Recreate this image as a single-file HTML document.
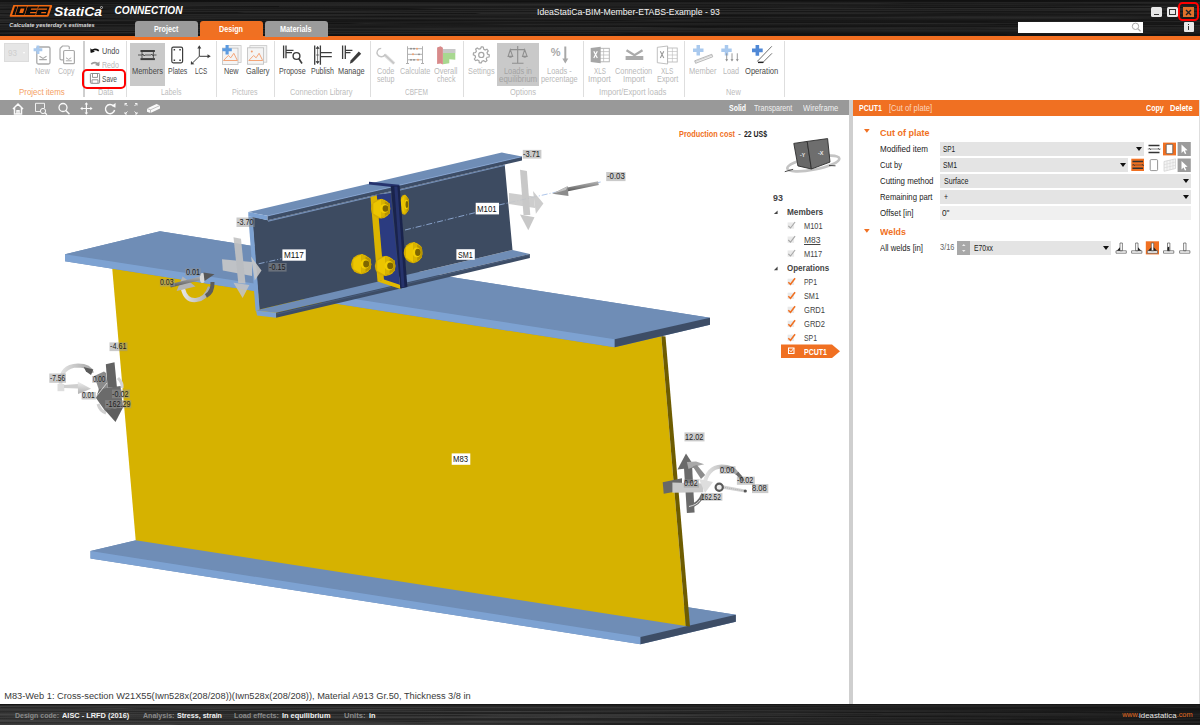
<!DOCTYPE html>
<html><head><meta charset="utf-8"><style>*{margin:0;padding:0;box-sizing:border-box}
html,body{width:1200px;height:725px;overflow:hidden;background:#fff;font-family:"Liberation Sans",sans-serif;position:relative}
.a{position:absolute;white-space:pre}
#hdr{position:absolute;left:0;top:0;width:1200px;height:36px;background:#121212;
background-image:repeating-linear-gradient(180deg,rgba(255,255,255,0) 0px,rgba(255,255,255,0.06) 1px,rgba(255,255,255,0) 2px,rgba(0,0,0,0) 3px,rgba(255,255,255,0.09) 4px,rgba(0,0,0,0) 5px,rgba(0,0,0,0) 7px)}
#oline{position:absolute;left:0;top:36px;width:1200px;height:3px;background:#f07022}
.tab{position:absolute;top:21.4px;height:15.6px;border-radius:3px 3px 0 0}
.sep{position:absolute;top:41px;width:1px;height:56px;background:#dedede}
#vtb{position:absolute;left:0;top:100px;width:849px;height:15px;background:#999}
#vsep{position:absolute;left:849px;top:100px;width:4px;height:604px;background:#cfcfcf}
#phdr{position:absolute;left:853px;top:100px;width:346px;height:15.5px;background:#f07022}
#rline{position:absolute;left:1199px;top:100px;width:1px;height:604px;background:#dedede}
.fld{position:absolute;background:#e4e4e4}
.dd{position:absolute;width:0;height:0;border-left:3px solid transparent;border-right:3px solid transparent;border-top:4px solid #111}
#ftr{position:absolute;left:0;top:704px;width:1200px;height:21px;background:#121212;
background-image:repeating-linear-gradient(180deg,rgba(255,255,255,0) 0px,rgba(255,255,255,0.07) 1px,rgba(255,255,255,0) 2px,rgba(0,0,0,0) 4px,rgba(255,255,255,0.06) 5px,rgba(0,0,0,0) 6px)}
svg{position:absolute;overflow:visible}
</style></head><body>
<div class="a" style="left:0;top:0px;width:1200px;height:36px;background:#101010"></div>
<div class="a" style="left:0;top:0px;width:1200px;height:1px;background:linear-gradient(90deg,rgba(255,255,255,0.020) 0.0%,rgba(255,255,255,0.001) 5.8%,rgba(255,255,255,0.017) 7.2%,rgba(255,255,255,0.003) 15.1%,rgba(255,255,255,0.004) 32.4%,rgba(255,255,255,0.017) 36.6%,rgba(255,255,255,0.033) 53.6%,rgba(255,255,255,0.005) 65.1%,rgba(255,255,255,0.009) 100.0%)"></div>
<div class="a" style="left:0;top:1px;width:1200px;height:1px;background:linear-gradient(90deg,rgba(255,255,255,0.012) 0.0%,rgba(255,255,255,0.006) 4.7%,rgba(255,255,255,0.005) 39.7%,rgba(255,255,255,0.012) 57.7%,rgba(255,255,255,0.033) 62.7%,rgba(255,255,255,0.007) 85.8%,rgba(255,255,255,0.023) 94.8%,rgba(255,255,255,0.026) 97.6%,rgba(255,255,255,0.015) 100.0%)"></div>
<div class="a" style="left:0;top:2px;width:1200px;height:1px;background:linear-gradient(90deg,rgba(255,255,255,0.069) 0.0%,rgba(255,255,255,0.055) 6.0%,rgba(255,255,255,0.040) 6.3%,rgba(255,255,255,0.089) 20.6%,rgba(255,255,255,0.080) 31.4%,rgba(255,255,255,0.034) 42.8%,rgba(255,255,255,0.067) 54.8%,rgba(255,255,255,0.063) 68.0%,rgba(255,255,255,0.098) 100.0%)"></div>
<div class="a" style="left:0;top:3px;width:1200px;height:1px;background:linear-gradient(90deg,rgba(255,255,255,0.059) 0.0%,rgba(255,255,255,0.014) 11.8%,rgba(255,255,255,0.077) 15.2%,rgba(255,255,255,0.086) 28.8%,rgba(255,255,255,0.067) 41.8%,rgba(255,255,255,0.098) 72.9%,rgba(255,255,255,0.041) 75.7%,rgba(255,255,255,0.080) 98.0%,rgba(255,255,255,0.069) 100.0%)"></div>
<div class="a" style="left:0;top:4px;width:1200px;height:1px;background:linear-gradient(90deg,rgba(255,255,255,0.080) 0.0%,rgba(255,255,255,0.075) 6.1%,rgba(255,255,255,0.109) 45.6%,rgba(255,255,255,0.092) 47.4%,rgba(255,255,255,0.038) 58.0%,rgba(255,255,255,0.049) 66.4%,rgba(255,255,255,0.077) 84.0%,rgba(255,255,255,0.012) 94.5%,rgba(255,255,255,0.056) 100.0%)"></div>
<div class="a" style="left:0;top:5px;width:1200px;height:1px;background:linear-gradient(90deg,rgba(255,255,255,0.097) 0.0%,rgba(255,255,255,0.018) 5.9%,rgba(255,255,255,0.055) 11.7%,rgba(255,255,255,0.065) 12.9%,rgba(255,255,255,0.098) 16.8%,rgba(255,255,255,0.092) 24.8%,rgba(255,255,255,0.096) 39.1%,rgba(255,255,255,0.038) 76.8%,rgba(255,255,255,0.052) 100.0%)"></div>
<div class="a" style="left:0;top:6px;width:1200px;height:1px;background:linear-gradient(90deg,rgba(255,255,255,0.058) 0.0%,rgba(255,255,255,0.069) 15.1%,rgba(255,255,255,0.036) 17.6%,rgba(255,255,255,0.010) 23.2%,rgba(255,255,255,0.052) 23.3%,rgba(255,255,255,0.047) 35.9%,rgba(255,255,255,0.067) 88.4%,rgba(255,255,255,0.105) 95.8%,rgba(255,255,255,0.079) 100.0%)"></div>
<div class="a" style="left:0;top:7px;width:1200px;height:1px;background:linear-gradient(90deg,rgba(255,255,255,0.090) 0.0%,rgba(255,255,255,0.049) 5.4%,rgba(255,255,255,0.050) 51.5%,rgba(255,255,255,0.020) 61.8%,rgba(255,255,255,0.073) 67.6%,rgba(255,255,255,0.016) 78.0%,rgba(255,255,255,0.017) 87.5%,rgba(255,255,255,0.031) 90.0%,rgba(255,255,255,0.026) 100.0%)"></div>
<div class="a" style="left:0;top:8px;width:1200px;height:1px;background:linear-gradient(90deg,rgba(255,255,255,0.097) 0.0%,rgba(255,255,255,0.071) 0.0%,rgba(255,255,255,0.025) 2.6%,rgba(255,255,255,0.035) 5.3%,rgba(255,255,255,0.045) 10.1%,rgba(255,255,255,0.046) 15.1%,rgba(255,255,255,0.022) 34.0%,rgba(255,255,255,0.095) 36.4%,rgba(255,255,255,0.109) 100.0%)"></div>
<div class="a" style="left:0;top:9px;width:1200px;height:1px;background:linear-gradient(90deg,rgba(255,255,255,0.026) 0.0%,rgba(255,255,255,0.012) 8.6%,rgba(255,255,255,0.105) 10.2%,rgba(255,255,255,0.063) 26.5%,rgba(255,255,255,0.025) 34.3%,rgba(255,255,255,0.064) 46.6%,rgba(255,255,255,0.013) 48.4%,rgba(255,255,255,0.063) 82.9%,rgba(255,255,255,0.108) 100.0%)"></div>
<div class="a" style="left:0;top:10px;width:1200px;height:1px;background:linear-gradient(90deg,rgba(255,255,255,0.088) 0.0%,rgba(255,255,255,0.043) 16.7%,rgba(255,255,255,0.032) 26.1%,rgba(255,255,255,0.091) 36.7%,rgba(255,255,255,0.108) 53.3%,rgba(255,255,255,0.095) 69.6%,rgba(255,255,255,0.091) 77.2%,rgba(255,255,255,0.092) 86.3%,rgba(255,255,255,0.084) 100.0%)"></div>
<div class="a" style="left:0;top:11px;width:1200px;height:1px;background:linear-gradient(90deg,rgba(255,255,255,0.079) 0.0%,rgba(255,255,255,0.106) 2.8%,rgba(255,255,255,0.055) 2.9%,rgba(255,255,255,0.104) 22.7%,rgba(255,255,255,0.109) 25.9%,rgba(255,255,255,0.106) 27.9%,rgba(255,255,255,0.046) 35.6%,rgba(255,255,255,0.032) 51.8%,rgba(255,255,255,0.033) 100.0%)"></div>
<div class="a" style="left:0;top:12px;width:1200px;height:1px;background:linear-gradient(90deg,rgba(255,255,255,0.090) 0.0%,rgba(255,255,255,0.018) 19.7%,rgba(255,255,255,0.076) 20.4%,rgba(255,255,255,0.101) 47.9%,rgba(255,255,255,0.088) 62.4%,rgba(255,255,255,0.085) 65.3%,rgba(255,255,255,0.058) 84.0%,rgba(255,255,255,0.028) 90.0%,rgba(255,255,255,0.089) 100.0%)"></div>
<div class="a" style="left:0;top:13px;width:1200px;height:1px;background:linear-gradient(90deg,rgba(255,255,255,0.027) 0.0%,rgba(255,255,255,0.023) 33.3%,rgba(255,255,255,0.025) 39.6%,rgba(255,255,255,0.100) 40.1%,rgba(255,255,255,0.091) 72.5%,rgba(255,255,255,0.025) 80.1%,rgba(255,255,255,0.093) 94.7%,rgba(255,255,255,0.108) 97.2%,rgba(255,255,255,0.076) 100.0%)"></div>
<div class="a" style="left:0;top:14px;width:1200px;height:1px;background:linear-gradient(90deg,rgba(255,255,255,0.103) 0.0%,rgba(255,255,255,0.053) 1.4%,rgba(255,255,255,0.097) 13.1%,rgba(255,255,255,0.093) 35.0%,rgba(255,255,255,0.031) 52.7%,rgba(255,255,255,0.035) 54.9%,rgba(255,255,255,0.039) 65.0%,rgba(255,255,255,0.034) 97.1%,rgba(255,255,255,0.069) 100.0%)"></div>
<div class="a" style="left:0;top:15px;width:1200px;height:1px;background:linear-gradient(90deg,rgba(255,255,255,0.100) 0.0%,rgba(255,255,255,0.052) 13.1%,rgba(255,255,255,0.102) 25.9%,rgba(255,255,255,0.060) 35.4%,rgba(255,255,255,0.063) 41.9%,rgba(255,255,255,0.062) 45.8%,rgba(255,255,255,0.012) 58.3%,rgba(255,255,255,0.054) 91.0%,rgba(255,255,255,0.028) 100.0%)"></div>
<div class="a" style="left:0;top:16px;width:1200px;height:1px;background:linear-gradient(90deg,rgba(255,255,255,0.062) 0.0%,rgba(255,255,255,0.066) 0.4%,rgba(255,255,255,0.088) 17.2%,rgba(255,255,255,0.021) 32.6%,rgba(255,255,255,0.066) 47.3%,rgba(255,255,255,0.035) 55.6%,rgba(255,255,255,0.038) 72.5%,rgba(255,255,255,0.087) 79.9%,rgba(255,255,255,0.061) 100.0%)"></div>
<div class="a" style="left:0;top:17px;width:1200px;height:1px;background:linear-gradient(90deg,rgba(255,255,255,0.079) 0.0%,rgba(255,255,255,0.055) 44.3%,rgba(255,255,255,0.063) 50.6%,rgba(255,255,255,0.058) 51.2%,rgba(255,255,255,0.104) 56.2%,rgba(255,255,255,0.080) 61.3%,rgba(255,255,255,0.098) 76.0%,rgba(255,255,255,0.104) 91.2%,rgba(255,255,255,0.036) 100.0%)"></div>
<div class="a" style="left:0;top:18px;width:1200px;height:1px;background:linear-gradient(90deg,rgba(255,255,255,0.034) 0.0%,rgba(255,255,255,0.017) 7.3%,rgba(255,255,255,0.077) 12.2%,rgba(255,255,255,0.088) 13.7%,rgba(255,255,255,0.100) 44.2%,rgba(255,255,255,0.025) 56.0%,rgba(255,255,255,0.082) 84.0%,rgba(255,255,255,0.076) 94.3%,rgba(255,255,255,0.024) 100.0%)"></div>
<div class="a" style="left:0;top:19px;width:1200px;height:1px;background:linear-gradient(90deg,rgba(255,255,255,0.093) 0.0%,rgba(255,255,255,0.026) 22.0%,rgba(255,255,255,0.053) 39.8%,rgba(255,255,255,0.062) 48.7%,rgba(255,255,255,0.044) 88.3%,rgba(255,255,255,0.030) 95.3%,rgba(255,255,255,0.042) 96.8%,rgba(255,255,255,0.082) 99.0%,rgba(255,255,255,0.012) 100.0%)"></div>
<div class="a" style="left:0;top:20px;width:1200px;height:1px;background:linear-gradient(90deg,rgba(255,255,255,0.109) 0.0%,rgba(255,255,255,0.089) 1.8%,rgba(255,255,255,0.107) 6.4%,rgba(255,255,255,0.020) 33.1%,rgba(255,255,255,0.037) 44.0%,rgba(255,255,255,0.014) 51.2%,rgba(255,255,255,0.088) 55.4%,rgba(255,255,255,0.037) 62.4%,rgba(255,255,255,0.023) 100.0%)"></div>
<div class="a" style="left:0;top:21px;width:1200px;height:1px;background:linear-gradient(90deg,rgba(255,255,255,0.080) 0.0%,rgba(255,255,255,0.019) 14.9%,rgba(255,255,255,0.016) 25.9%,rgba(255,255,255,0.079) 42.2%,rgba(255,255,255,0.053) 57.1%,rgba(255,255,255,0.017) 81.9%,rgba(255,255,255,0.104) 91.1%,rgba(255,255,255,0.073) 91.9%,rgba(255,255,255,0.090) 100.0%)"></div>
<div class="a" style="left:0;top:22px;width:1200px;height:1px;background:linear-gradient(90deg,rgba(255,255,255,0.103) 0.0%,rgba(255,255,255,0.037) 6.7%,rgba(255,255,255,0.023) 8.4%,rgba(255,255,255,0.063) 33.9%,rgba(255,255,255,0.034) 45.4%,rgba(255,255,255,0.021) 55.3%,rgba(255,255,255,0.026) 85.6%,rgba(255,255,255,0.015) 86.3%,rgba(255,255,255,0.030) 100.0%)"></div>
<div class="a" style="left:0;top:23px;width:1200px;height:1px;background:linear-gradient(90deg,rgba(255,255,255,0.012) 0.0%,rgba(255,255,255,0.035) 17.8%,rgba(255,255,255,0.012) 29.0%,rgba(255,255,255,0.083) 30.5%,rgba(255,255,255,0.065) 31.2%,rgba(255,255,255,0.029) 34.7%,rgba(255,255,255,0.057) 50.0%,rgba(255,255,255,0.103) 75.9%,rgba(255,255,255,0.021) 100.0%)"></div>
<div class="a" style="left:0;top:24px;width:1200px;height:1px;background:linear-gradient(90deg,rgba(255,255,255,0.108) 0.0%,rgba(255,255,255,0.044) 39.3%,rgba(255,255,255,0.093) 43.2%,rgba(255,255,255,0.081) 49.5%,rgba(255,255,255,0.074) 50.7%,rgba(255,255,255,0.050) 68.8%,rgba(255,255,255,0.045) 81.9%,rgba(255,255,255,0.015) 83.5%,rgba(255,255,255,0.023) 100.0%)"></div>
<div class="a" style="left:0;top:25px;width:1200px;height:1px;background:linear-gradient(90deg,rgba(255,255,255,0.077) 0.0%,rgba(255,255,255,0.038) 7.1%,rgba(255,255,255,0.034) 8.4%,rgba(255,255,255,0.039) 16.3%,rgba(255,255,255,0.056) 25.6%,rgba(255,255,255,0.026) 74.1%,rgba(255,255,255,0.055) 84.1%,rgba(255,255,255,0.036) 87.1%,rgba(255,255,255,0.106) 100.0%)"></div>
<div class="a" style="left:0;top:26px;width:1200px;height:1px;background:linear-gradient(90deg,rgba(255,255,255,0.048) 0.0%,rgba(255,255,255,0.057) 0.1%,rgba(255,255,255,0.060) 24.4%,rgba(255,255,255,0.030) 31.0%,rgba(255,255,255,0.060) 35.7%,rgba(255,255,255,0.010) 54.7%,rgba(255,255,255,0.036) 96.6%,rgba(255,255,255,0.019) 97.3%,rgba(255,255,255,0.050) 100.0%)"></div>
<div class="a" style="left:0;top:27px;width:1200px;height:1px;background:linear-gradient(90deg,rgba(255,255,255,0.076) 0.0%,rgba(255,255,255,0.082) 2.2%,rgba(255,255,255,0.098) 4.2%,rgba(255,255,255,0.049) 23.3%,rgba(255,255,255,0.043) 30.4%,rgba(255,255,255,0.108) 52.9%,rgba(255,255,255,0.025) 58.6%,rgba(255,255,255,0.082) 75.1%,rgba(255,255,255,0.074) 100.0%)"></div>
<div class="a" style="left:0;top:28px;width:1200px;height:1px;background:linear-gradient(90deg,rgba(255,255,255,0.062) 0.0%,rgba(255,255,255,0.060) 4.4%,rgba(255,255,255,0.093) 13.9%,rgba(255,255,255,0.090) 62.7%,rgba(255,255,255,0.093) 73.4%,rgba(255,255,255,0.068) 81.2%,rgba(255,255,255,0.099) 83.5%,rgba(255,255,255,0.078) 89.2%,rgba(255,255,255,0.079) 100.0%)"></div>
<div class="a" style="left:0;top:29px;width:1200px;height:1px;background:linear-gradient(90deg,rgba(255,255,255,0.073) 0.0%,rgba(255,255,255,0.073) 3.1%,rgba(255,255,255,0.078) 10.5%,rgba(255,255,255,0.059) 13.3%,rgba(255,255,255,0.010) 23.0%,rgba(255,255,255,0.090) 36.1%,rgba(255,255,255,0.085) 55.9%,rgba(255,255,255,0.060) 83.6%,rgba(255,255,255,0.064) 100.0%)"></div>
<div class="a" style="left:0;top:30px;width:1200px;height:1px;background:linear-gradient(90deg,rgba(255,255,255,0.031) 0.0%,rgba(255,255,255,0.084) 6.6%,rgba(255,255,255,0.108) 7.4%,rgba(255,255,255,0.059) 25.2%,rgba(255,255,255,0.048) 26.6%,rgba(255,255,255,0.058) 65.9%,rgba(255,255,255,0.078) 72.9%,rgba(255,255,255,0.087) 73.7%,rgba(255,255,255,0.072) 100.0%)"></div>
<div class="a" style="left:0;top:31px;width:1200px;height:1px;background:linear-gradient(90deg,rgba(255,255,255,0.011) 0.0%,rgba(255,255,255,0.016) 7.7%,rgba(255,255,255,0.037) 14.7%,rgba(255,255,255,0.077) 25.4%,rgba(255,255,255,0.079) 30.4%,rgba(255,255,255,0.078) 56.8%,rgba(255,255,255,0.039) 64.3%,rgba(255,255,255,0.062) 74.3%,rgba(255,255,255,0.056) 100.0%)"></div>
<div class="a" style="left:0;top:32px;width:1200px;height:1px;background:linear-gradient(90deg,rgba(255,255,255,0.056) 0.0%,rgba(255,255,255,0.092) 1.8%,rgba(255,255,255,0.107) 11.9%,rgba(255,255,255,0.055) 19.9%,rgba(255,255,255,0.037) 46.6%,rgba(255,255,255,0.031) 89.4%,rgba(255,255,255,0.105) 93.6%,rgba(255,255,255,0.031) 97.8%,rgba(255,255,255,0.068) 100.0%)"></div>
<div class="a" style="left:0;top:33px;width:1200px;height:1px;background:linear-gradient(90deg,rgba(255,255,255,0.080) 0.0%,rgba(255,255,255,0.033) 13.3%,rgba(255,255,255,0.100) 14.2%,rgba(255,255,255,0.059) 50.9%,rgba(255,255,255,0.012) 52.4%,rgba(255,255,255,0.010) 82.0%,rgba(255,255,255,0.059) 88.7%,rgba(255,255,255,0.055) 95.3%,rgba(255,255,255,0.040) 100.0%)"></div>
<div class="a" style="left:0;top:34px;width:1200px;height:1px;background:linear-gradient(90deg,rgba(255,255,255,0.002) 0.0%,rgba(255,255,255,0.019) 0.2%,rgba(255,255,255,0.014) 14.1%,rgba(255,255,255,0.018) 31.6%,rgba(255,255,255,0.006) 34.4%,rgba(255,255,255,0.007) 75.1%,rgba(255,255,255,0.008) 83.9%,rgba(255,255,255,0.020) 84.0%,rgba(255,255,255,0.012) 100.0%)"></div>
<div class="a" style="left:0;top:35px;width:1200px;height:1px;background:linear-gradient(90deg,rgba(255,255,255,0.019) 0.0%,rgba(255,255,255,0.005) 4.8%,rgba(255,255,255,0.005) 10.2%,rgba(255,255,255,0.010) 27.5%,rgba(255,255,255,0.004) 28.6%,rgba(255,255,255,0.007) 36.1%,rgba(255,255,255,0.019) 42.8%,rgba(255,255,255,0.018) 83.5%,rgba(255,255,255,0.016) 100.0%)"></div>
<div class="a" style="left:0;top:36px;width:1200px;height:3.5px;background:#f36f21"></div>
<svg style="left:0;top:0" width="60" height="20">
 <path d="M13.6 4.9 H51.2 Q52.6 4.9 52.1 6.2 L48.9 15.6 Q48.5 16.8 47.3 16.8 H10.6 Q9.3 16.8 9.8 15.5 L13 6 Q13.3 4.9 13.6 4.9 Z" fill="#f26a12"/>
 <path d="M14.9 6.5 H17.4 L14.7 15.1 H12.2 Z" fill="#0c0c0c"/>
 <path d="M18.1 6.5 H27 L24.3 15.1 H15.4 Z" fill="#0c0c0c"/>
 <path d="M20.7 8.4 H24.5 L23 13 H19.2 Z" fill="#f26a12"/>
 <path d="M27.6 6.5 H38 L35.3 15.1 H24.9 Z" fill="#0c0c0c"/>
 <path d="M31.2 8.4 H37.2 L36.8 9.7 H30.8 Z M30.3 12 H36.3 L35.9 13.2 H29.9 Z" fill="#f26a12"/>
 <path d="M38.7 6.5 H49.7 L47 15.1 H36 Z" fill="#0c0c0c"/>
 <path d="M38.4 8.4 H47.2 L46.8 9.7 H38 Z M41.4 12 H46.2 L45.8 13.2 H41 Z" fill="#f26a12"/>
</svg>
<div class="a" style="left:99.8px;top:6.2px;width:2.8px;height:2.8px;border-radius:50%;border:0.6px solid #bbb"></div>
<div class="tab" style="left:135px;width:62.5px;background:#9b9b9b"></div>
<div class="tab" style="left:200px;width:62.5px;background:#f07022"></div>
<div class="tab" style="left:265px;width:62.5px;background:#9b9b9b"></div>
<div class="a" style="left:1151px;top:6.5px;width:10.5px;height:10.5px;background:#e8e8e8;border-radius:1.5px"></div>
<div class="a" style="left:1153.5px;top:13.5px;width:5.5px;height:1.5px;background:#333"></div>
<div class="a" style="left:1167px;top:6.5px;width:10.5px;height:10.5px;background:#e8e8e8;border-radius:1.5px"></div>
<div class="a" style="left:1169px;top:8.5px;width:6.5px;height:6.5px;border:1px solid #333;border-top-width:1.6px"></div>
<div class="a" style="left:1177.5px;top:2px;width:21.5px;height:19px;border:2.4px solid #f00;border-radius:4.5px"></div>
<div class="a" style="left:1183px;top:6.5px;width:10.5px;height:10.5px;background:#e0702a"></div>
<svg style="left:1183px;top:6.5px" width="11" height="11"><path d="M3 3 L8 8 M8 3 L3 8" stroke="#222" stroke-width="1.4"/></svg>
<div class="a" style="left:1017.5px;top:21.5px;width:125.5px;height:11px;background:#fff"></div>
<svg style="left:1131px;top:22px" width="11" height="10"><circle cx="4.5" cy="4.3" r="3.2" fill="none" stroke="#aaa" stroke-width="1"/><path d="M6.8 6.6 L9.5 9.3" stroke="#aaa" stroke-width="1.3"/></svg>
<div class="a" style="left:1183.5px;top:22px;width:10px;height:9.7px;background:#e8e8e8;border-radius:1px"></div>
<div class="a" style="left:1188px;top:24px;width:1.4px;height:1.3px;background:#333"></div>
<div class="a" style="left:1188px;top:26px;width:1.4px;height:3.6px;background:#333"></div>

<!-- ribbon -->
<div class="a" style="left:82.5px;top:41px;width:2px;height:56px;background:#cfcfcf"></div>
<div class="sep" style="left:125.5px"></div>
<div class="sep" style="left:215.5px"></div>
<div class="sep" style="left:274px"></div>
<div class="sep" style="left:369.5px"></div>
<div class="sep" style="left:462.5px"></div>
<div class="sep" style="left:583px"></div>
<div class="sep" style="left:683.5px"></div>
<div class="sep" style="left:783.5px"></div>
<div class="a" style="left:4px;top:43.3px;width:25px;height:18.7px;background:#e6e6e6;border:1px solid #dcdcdc"></div>
<div class="a" style="left:23px;top:52px;width:0;height:0;border-left:1.5px solid transparent;border-right:1.5px solid transparent;border-top:2px solid #fff"></div>
<div class="a" style="left:130px;top:43.3px;width:35px;height:42.7px;background:#c9c9c9"></div>
<div class="a" style="left:497px;top:43.3px;width:42px;height:42.7px;background:#c9c9c9"></div>
<div class="a" style="left:82px;top:69.1px;width:44.3px;height:19.9px;border:2.6px solid #f00;border-radius:5px"></div>
<svg style="left:0;top:0" width="1200" height="100">
<rect x="36.8" y="47" width="13.2" height="17" rx="1.5" fill="#fff" stroke="#a9a9a9" stroke-width="1.3"/>
<path d="M39.5 56.2 l3.5 2.2 l3.5 -2.2 M39.2 59.6 h7.6" stroke="#a9a9a9" stroke-width="1.1" fill="none"/>
<path d="M36.5 45.4 h2.9 v2.9 h2.9 v2.9 h-2.9 v2.9 h-2.9 v-2.9 h-2.9 v-2.9 h2.9 z" fill="#a9c9ee"/>
<path d="M60 48.5 v10 q0 1.3 1.3 1.3 h2.5 M60 48.5 l2.5 -2.5 h5.5 q1.3 0 1.3 1.3 v2" stroke="#a9a9a9" stroke-width="1.2" fill="none"/>
<rect x="63.6" y="50.5" width="10.8" height="13.2" rx="1.3" fill="#fff" stroke="#a9a9a9" stroke-width="1.2"/>
<path d="M66 57.8 l2.6 1.6 l2.6 -1.6 M65.8 60.8 h6" stroke="#a9a9a9" stroke-width="1" fill="none"/>
<path d="M91 51.5 q3 -3.8 7.8 -0.8" stroke="#111" stroke-width="1.8" fill="none"/><path d="M90.3 48.3 l0.4 4.6 l4.2 -1.2 z" fill="#111"/>
<path d="M99 64.8 q-3 -3.8 -7.8 -0.8" stroke="#9a9a9a" stroke-width="1.8" fill="none"/><path d="M99.6 61.6 l-0.4 4.6 l-4.2 -1.2 z" fill="#9a9a9a"/>
<rect x="90.4" y="73.5" width="9.2" height="9.8" rx="0.8" fill="none" stroke="#8a8a8a" stroke-width="1"/><path d="M92.5 73.8 v3.6 h5 v-3.6 M92 83 v-3.2 h6 v3.2" stroke="#8a8a8a" stroke-width="0.9" fill="none"/>
<rect x="140.5" y="50" width="14.4" height="2" fill="#3c3c3c"/><rect x="140.5" y="58.1" width="14.4" height="2" fill="#3c3c3c"/>
<path d="M138 55 h4 l1 -1 l1 2 l1 -1 h6 l1 -1 l1 2 l1 -1 h2.5" stroke="#3c3c3c" stroke-width="0.8" fill="none"/>
<path d="M142 52 v6 M153.4 52 v6" stroke="#3c3c3c" stroke-width="0.8"/>
<rect x="171.8" y="47.2" width="10.8" height="15.6" rx="1.5" fill="none" stroke="#3c3c3c" stroke-width="1.2"/>
<g fill="#3c3c3c"><rect x="173.6" y="49" width="1.5" height="1.5"/><rect x="179.3" y="49" width="1.5" height="1.5"/><rect x="173.6" y="59.5" width="1.5" height="1.5"/><rect x="179.3" y="59.5" width="1.5" height="1.5"/></g>
<path d="M199.3 56.3 V47.5 M199.3 56.3 H208.5 M199.3 56.3 L192.8 62.7" stroke="#3c3c3c" stroke-width="1" fill="none"/>
<path d="M197.3 48.5 L199.3 45.3 L201.3 48.5 Z M207.5 54.3 L210.8 56.3 L207.5 58.3 Z M191 61 L190.8 64.6 L194.4 64.3 Z" fill="#3c3c3c"/>
<rect x="226.8" y="45.6" width="14.3" height="16.9" fill="#f2f2f2" stroke="#c8c8c8" stroke-width="0.8"/>
<rect x="222.4" y="48.1" width="15.6" height="16.3" fill="#f4f4f4" stroke="#bdbdbd" stroke-width="0.8"/>
<path d="M223.5 60.5 l4.8 -5 l2.5 2.3 l3 -4.5 l3.6 7.2 z" fill="none" stroke="#f39c6b" stroke-width="0.9"/>
<path d="M225.53333333333333 45 h3.1333333333333333 v3.1333333333333333 h3.1333333333333333 v3.1333333333333333 h-3.1333333333333333 v3.1333333333333333 h-3.1333333333333333 v-3.1333333333333333 h-3.1333333333333333 v-3.1333333333333333 h3.1333333333333333 z" fill="#5b9ae0"/>
<rect x="249.9" y="45.6" width="16.9" height="16.6" fill="#f2f2f2" stroke="#c8c8c8" stroke-width="0.8"/>
<rect x="247.4" y="47.8" width="16.2" height="16.4" fill="#f4f4f4" stroke="#bdbdbd" stroke-width="0.8"/>
<path d="M248.8 60.5 l4.8 -5 l2.5 2.3 l3 -4.5 l3.6 7.2 z" fill="none" stroke="#f39c6b" stroke-width="0.9"/><circle cx="251.8" cy="51.5" r="1" fill="#f39c6b"/>
<path d="M283.6 45.5 V58.3 M286 45.5 V58.3 M286 50.3 H293.5 M286 52.7 H292" stroke="#3c3c3c" stroke-width="1.3" fill="none"/>
<circle cx="296.5" cy="56" r="3.4" fill="none" stroke="#3c3c3c" stroke-width="1.4"/><path d="M298.8 58.5 L302 63.5" stroke="#3c3c3c" stroke-width="1.6"/>
<path d="M314.7 45.5 V64.7 M320.4 45.5 V64.7 M320.4 52.7 H331.8 M320.4 56.6 H331.8" stroke="#3c3c3c" stroke-width="1.3" fill="none"/>
<path d="M317.6 46.5 V63.5" stroke="#3c3c3c" stroke-width="0.7"/><path d="M316 48.5 l1.6 -2 l1.6 2 z M316 61.5 l1.6 2 l1.6 -2 z M316 55 h3.2" fill="#3c3c3c" stroke="#3c3c3c" stroke-width="0.6"/>
<path d="M342.6 45.5 V59 M345.3 45.5 V59 M345.3 50.3 H352.4 M345.3 52.7 H350.5" stroke="#3c3c3c" stroke-width="1.3" fill="none"/>
<path d="M358.8 51.6 L361.2 53.8 L352.6 62.4 L349.8 63.8 L350.6 60.4 Z" fill="#3c3c3c"/>
<path d="M381.2 48.4 a4.2 4.2 0 1 0 3.6 6.4 l9.2 8.6" stroke="#c4c4c4" stroke-width="1.4" fill="none"/><path d="M384.6 54.8 l9.6 8.8" stroke="#c4c4c4" stroke-width="3.2" fill="none" opacity="0.6"/>
<path d="M407.5 46.3 V63.7 M422.5 46.3 V63.7 M406 63.5 h3 M421 63.5 h3 M407.5 48.7 H422.5 M407.5 54.3 H422.5 M407.5 59.8 H422.5" stroke="#b0b0b0" stroke-width="1" fill="none"/>
<g fill="#8a8a8a"><circle cx="411" cy="48.7" r="0.9"/><circle cx="414" cy="48.7" r="0.9"/><circle cx="419" cy="54.3" r="0.9"/><circle cx="411" cy="59.8" r="0.9"/><circle cx="414" cy="59.8" r="0.9"/></g><g fill="#f0a070"><circle cx="417" cy="48.7" r="1"/><circle cx="413" cy="54.3" r="1"/><circle cx="418" cy="59.8" r="1"/></g>
<path d="M437.1 47.5 l3.5 -1.2 l2.3 1.5 v16.7 l-2.3 -1 l-3.5 0.5 z" fill="#d88a8a"/><path d="M443 49 h12.5 v4 h-12.5 z" fill="#c8c8c8"/><path d="M443 53 h12.3 v6.8 l-6 -0.6 v4 l-6.3 1 z" fill="#a8d890"/>
<polygon points="489.30,54.90 489.23,55.94 489.03,56.97 487.03,57.27 486.67,58.00 486.22,58.67 486.96,60.56 486.17,61.25 485.30,61.83 483.67,60.63 482.90,60.89 482.11,61.05 481.30,62.90 480.26,62.83 479.23,62.63 478.93,60.63 478.20,60.27 477.53,59.82 475.64,60.56 474.95,59.77 474.37,58.90 475.57,57.27 475.31,56.50 475.15,55.71 473.30,54.90 473.37,53.86 473.57,52.83 475.57,52.53 475.93,51.80 476.38,51.13 475.64,49.24 476.43,48.55 477.30,47.97 478.93,49.17 479.70,48.91 480.49,48.75 481.30,46.90 482.34,46.97 483.37,47.17 483.67,49.17 484.40,49.53 485.07,49.98 486.96,49.24 487.65,50.03 488.23,50.90 487.03,52.53 487.29,53.30 487.45,54.09" fill="none" stroke="#a6a6a6" stroke-width="1.2"/><circle cx="481.3" cy="54.9" r="2.6" fill="none" stroke="#a6a6a6" stroke-width="1.2"/>
<path d="M517.7 46 V63 M512 63.2 h11.5 M510 49.6 H525 M510.3 49.6 l-2.2 6.8 h4.6 z M524.7 49.6 l-2.2 6.8 h4.6 z" stroke="#8f8f8f" stroke-width="1.1" fill="none"/><path d="M508.1 56.4 q2.3 2.6 4.6 0 z M522.5 56.4 q2.3 2.6 4.6 0 z" fill="#8f8f8f"/>
<text x="550.8" y="56" font-family="Liberation Sans" font-size="11" font-weight="bold" fill="#a8a8a8" letter-spacing="-0.5">%</text><path d="M565.3 46.5 V60" stroke="#a8a8a8" stroke-width="2"/><path d="M562.3 58.5 L565.3 63.5 L568.3 58.5 Z" fill="#a8a8a8"/>
<rect x="598" y="48.3" width="11.3" height="13.5" fill="none" stroke="#b0b0b0" stroke-width="0.9"/><path d="M598 51.6 h11.3 M598 55 h11.3 M598 58.4 h11.3 M603.6 48.3 v13.5" stroke="#b8b8b8" stroke-width="0.7"/><path d="M590.7 48 l10 -1.3 v16.6 l-10 -1.3 z" fill="#a6a6a6"/><path d="M593.8 51.2 l3.5 6.8 M597.3 51.2 l-3.5 6.8" stroke="#fff" stroke-width="1.2"/>
<path d="M625.6 56 H643.3 V60 H625.6 Z" fill="#ababab"/><path d="M626.5 50.2 L634.5 55.2 L642.5 50.2" stroke="#ababab" stroke-width="2.4" fill="none"/>
<path d="M657.3 47.3 l10.3 -1.3 v18 l-10.3 -1.3 z" fill="#fff" stroke="#b0b0b0" stroke-width="0.8"/><rect x="667.6" y="48" width="9.6" height="14" fill="none" stroke="#b4b4b4" stroke-width="0.8"/><path d="M667.6 51.5 h9.6 M667.6 55 h9.6 M667.6 58.5 h9.6 M672.4 48 v14" stroke="#bbb" stroke-width="0.6"/><path d="M660.3 51.2 l3.5 6.8 M663.8 51.2 l-3.5 6.8" stroke="#999" stroke-width="1.1"/>
<path d="M696.5 45 h3.5 v3.5 h3.5 v3.5 h-3.5 v3.5 h-3.5 v-3.5 h-3.5 v-3.5 h3.5 z" fill="#a9c9ee"/>
<path d="M694.7 60.8 L711.8 54.3 L712.7 56.8 L695.6 63.3 Z" fill="#f4f4f4" stroke="#b0b0b0" stroke-width="0.9"/><path d="M695 61.7 l17 -6.4" stroke="#c0c0c0" stroke-width="0.6"/>
<path d="M724.7666666666667 45 h3.466666666666667 v3.466666666666667 h3.466666666666667 v3.466666666666667 h-3.466666666666667 v3.466666666666667 h-3.466666666666667 v-3.466666666666667 h-3.466666666666667 v-3.466666666666667 h3.466666666666667 z" fill="#a9c9ee"/>
<path d="M726.7 53.3 V60 M732 53.3 V60 M737.3 53.3 V60" stroke="#8f8f8f" stroke-width="0.9"/><path d="M725.2 59.3 l1.5 2.2 l1.5 -2.2 z M730.5 59.3 l1.5 2.2 l1.5 -2.2 z M735.8 59.3 l1.5 2.2 l1.5 -2.2 z" fill="#8f8f8f"/>
<path d="M755.5666666666667 45 h3.5666666666666664 v3.5666666666666664 h3.5666666666666664 v3.5666666666666664 h-3.5666666666666664 v3.5666666666666664 h-3.5666666666666664 v-3.5666666666666664 h-3.5666666666666664 v-3.5666666666666664 h3.5666666666666664 z" fill="#4f88d6"/>
<path d="M757.5 61.2 L771.8 46.3 M763.3 62 H758.4 L757.5 61.2 M763.3 62 L772 53.3" stroke="#707070" stroke-width="1" fill="none"/><path d="M758 62.5 h5.5" stroke="#222" stroke-width="1.2"/>
</svg>

<div id="vtb"></div>
<svg style="left:0;top:100px" width="170" height="16">
<path d="M13 9 L18 4 L23 9 M14.5 7.8 V14 H21.5 V7.8 M17 14 V10.8 H19 V14" stroke="#fafafa" stroke-width="1.5" fill="none"/>
<path d="M35.5 3.3 H44.5 V8 M35.5 3.3 V11.5 H40" stroke="#fafafa" stroke-width="0.9" fill="none"/><circle cx="43" cy="11" r="2.6" fill="none" stroke="#fafafa" stroke-width="1"/><path d="M44.8 12.8 L47 14.8" stroke="#fafafa" stroke-width="1.2"/>
<circle cx="63" cy="7.5" r="4" fill="none" stroke="#fafafa" stroke-width="1.3"/><path d="M65.8 10.5 L69.5 14.2" stroke="#fafafa" stroke-width="1.5"/>
<path d="M86.4 3 V14 M81 8.5 H92" stroke="#fafafa" stroke-width="1.2"/><path d="M84.6 4.5 L86.4 2.2 L88.2 4.5 Z M84.6 12.5 L86.4 14.8 L88.2 12.5 Z M82.5 6.7 L80.2 8.5 L82.5 10.3 Z M90.3 6.7 L92.6 8.5 L90.3 10.3 Z" fill="#fafafa"/>
<path d="M113.5 6 A4.6 4.6 0 1 0 114.6 10" stroke="#fafafa" stroke-width="1.4" fill="none"/><path d="M111.5 5.7 L115.6 3 L115.4 7.8 Z" fill="#fafafa"/>
<path d="M125 3.5 l2.5 2.5 M125 3.5 h2 M125 3.5 v2 M137 3.5 l-2.5 2.5 M137 3.5 h-2 M137 3.5 v2 M125 14 l2.5 -2.5 M125 14 h2 M125 14 v-2 M137 14 l-2.5 -2.5 M137 14 h-2 M137 14 v-2" stroke="#fafafa" stroke-width="0.9" fill="none"/>
<path d="M147 8.5 L156.5 4 L160 5.5 L160 8.6 L150.5 13 L147 11.8 Z" fill="#fafafa"/><path d="M147 8.5 L150.5 9.8 L160 5.5 M150.5 9.8 V13" stroke="#999" stroke-width="0.6" fill="none"/>
</svg>
<div id="vsep"></div>
<div id="phdr"></div>
<div id="rline"></div>

<!-- right panel fields -->
<svg style="left:863.8px;top:129.2px" width="6" height="4"><path d="M0 0 H5.7 L2.85 3.8 Z" fill="#f07022"/></svg>
<svg style="left:863.8px;top:228.5px" width="6" height="4"><path d="M0 0 H5.7 L2.85 3.8 Z" fill="#f07022"/></svg>
<div class="fld" style="left:939.5px;top:142px;width:204.5px;height:13.7px"></div>
<div class="dd" style="left:1136px;top:147px"></div>
<div class="fld" style="left:939.5px;top:158px;width:188.5px;height:14px"></div>
<div class="dd" style="left:1120px;top:163px"></div>
<div class="fld" style="left:939.5px;top:174.2px;width:251.5px;height:13.8px"></div>
<div class="dd" style="left:1183px;top:179px"></div>
<div class="fld" style="left:939.5px;top:190.2px;width:251.5px;height:14px"></div>
<div class="dd" style="left:1183px;top:195px"></div>
<div class="fld" style="left:939.5px;top:206px;width:251.5px;height:14.2px;background:#f0f0f0"></div>
<div class="a" style="left:956.5px;top:241.2px;width:13.5px;height:13.5px;background:#a8a8a8"></div>
<svg style="left:956.5px;top:241.2px" width="14" height="14"><path d="M5 5 L6.75 3 L8.5 5 Z M5 9 L6.75 11 L8.5 9 Z" fill="#eee"/></svg>
<div class="fld" style="left:970px;top:241.2px;width:141px;height:13.5px"></div>
<div class="dd" style="left:1103px;top:246px"></div>
<svg style="left:0;top:0" width="1200" height="260">
<path d="M1148.5 145.5 H1159.5 M1148.5 152.5 H1159.5" stroke="#333" stroke-width="1.6"/><path d="M1147.8 149 h1.5 l0.5 -1 l0.5 2 l0.5 -1 h7.3 l0.5 -1 l0.5 2 l0.5 -1 h1" stroke="#333" stroke-width="0.6" fill="none"/>
<rect x="1163" y="142.6" width="13" height="12.8" fill="#f07022"/><rect x="1166.2" y="144.3" width="6.6" height="9.4" rx="0.8" fill="#fff" stroke="#555" stroke-width="0.8"/>
<rect x="1177.6" y="142" width="13.2" height="14" fill="#9c9c9c"/><path d="M1181.5 144.5 L1181.5 153 L1183.5 151 L1185 154 L1186.3 153.4 L1184.9 150.4 L1187.6 150.2 Z" fill="#fff"/>
<rect x="1131.3" y="158.7" width="12.7" height="12.3" fill="#f07022"/><path d="M1132.5 161.5 H1143 M1132.5 168.2 H1143" stroke="#333" stroke-width="1.6"/><path d="M1132 165 h1.2 l0.5 -1 l0.5 2 l0.5 -1 h7.4 l0.5 -1 l0.5 2 l0.5 -1" stroke="#333" stroke-width="0.6" fill="none"/>
<rect x="1150.2" y="159.6" width="7.4" height="11" rx="1" fill="#fff" stroke="#777" stroke-width="0.8"/>
<path d="M1164 161.5 L1175.5 158.8 V168.5 L1164 171.3 Z" fill="#f4f4f4" stroke="#c8c8c8" stroke-width="0.6"/><path d="M1167 160.8 V170.6 M1170 160.1 V169.9 M1173 159.4 V169.2 M1164 164.7 L1175.5 162 M1164 167.9 L1175.5 165.2" stroke="#d0d0d0" stroke-width="0.5"/>
<rect x="1177.6" y="158.5" width="13.2" height="13.5" fill="#9c9c9c"/><path d="M1181.5 161 L1181.5 169.5 L1183.5 167.5 L1185 170.5 L1186.3 169.9 L1184.9 166.9 L1187.6 166.7 Z" fill="#fff"/>
<path d="M1116 250.8 h10.3 v2.4 h-10.3 z M1120 243 h2.4 v7.8 h-2.4 z" fill="#fff" stroke="#555" stroke-width="0.7"/><path d="M1116.8 250.8 L1120 247.2 V250.8 Z" fill="#222"/>
<path d="M1131.6 250.8 h10.3 v2.4 h-10.3 z M1135.6 243 h2.4 v7.8 h-2.4 z" fill="#fff" stroke="#555" stroke-width="0.7"/><path d="M1141.1999999999998 250.8 L1138.0 247.2 V250.8 Z" fill="#222"/>
<rect x="1145.8" y="241.3" width="13.2" height="13.1" fill="#f07022"/><path d="M1147.3 250.8 h10.3 v2.4 h-10.3 z M1151.3 243 h2.4 v7.8 h-2.4 z" fill="#fff" stroke="#555" stroke-width="0.7"/><path d="M1148.1 250.8 L1151.3 247.2 V250.8 Z" fill="#222"/><path d="M1156.8999999999999 250.8 L1153.7 247.2 V250.8 Z" fill="#222"/>
<path d="M1163.5 250.8 h10.3 v2.4 h-10.3 z M1167.5 243 h2.4 v7.8 h-2.4 z" fill="#fff" stroke="#555" stroke-width="0.7"/><path d="M1167.5 250.8 V247.5 L1169.3 246.5 V250.8 Z" fill="#222"/>
<path d="M1179.6 250.8 h10.3 v2.4 h-10.3 z M1183.6 243 h2.4 v7.8 h-2.4 z" fill="#fff" stroke="#555" stroke-width="0.7"/>
</svg>

<!-- tree -->
<svg style="left:0;top:0" width="860" height="370">
<path d="M773.9 214.1 L777.6 210.4 V214.1 Z M773.9 270.2 L777.6 266.5 V270.2 Z" fill="#444"/>
<rect x="787.6" y="222.4" width="6.5" height="6.3" fill="#e9e9e9"/>
<path d="M788.3 225.9 l2.2 2.1 l4.6 -6" stroke="#a8a8a8" stroke-width="1.1" fill="none"/>
<rect x="787.6" y="236.5" width="6.5" height="6.3" fill="#e9e9e9"/>
<path d="M788.3 240.0 l2.2 2.1 l4.6 -6" stroke="#a8a8a8" stroke-width="1.1" fill="none"/>
<rect x="787.6" y="250.4" width="6.5" height="6.3" fill="#e9e9e9"/>
<path d="M788.3 253.9 l2.2 2.1 l4.6 -6" stroke="#a8a8a8" stroke-width="1.1" fill="none"/>
<rect x="787.6" y="278.7" width="6.5" height="6.3" fill="#e9e9e9"/>
<path d="M788.3 282.2 l2.2 2.1 l4.6 -6" stroke="#f07022" stroke-width="1.5" fill="none"/>
<rect x="787.6" y="292.7" width="6.5" height="6.3" fill="#e9e9e9"/>
<path d="M788.3 296.2 l2.2 2.1 l4.6 -6" stroke="#f07022" stroke-width="1.5" fill="none"/>
<rect x="787.6" y="306.7" width="6.5" height="6.3" fill="#e9e9e9"/>
<path d="M788.3 310.2 l2.2 2.1 l4.6 -6" stroke="#f07022" stroke-width="1.5" fill="none"/>
<rect x="787.6" y="320.7" width="6.5" height="6.3" fill="#e9e9e9"/>
<path d="M788.3 324.2 l2.2 2.1 l4.6 -6" stroke="#f07022" stroke-width="1.5" fill="none"/>
<rect x="787.6" y="334.7" width="6.5" height="6.3" fill="#e9e9e9"/>
<path d="M788.3 338.2 l2.2 2.1 l4.6 -6" stroke="#f07022" stroke-width="1.5" fill="none"/>
<path d="M781 344.5 H832 L840 351.3 L832 358 H781 Z" fill="#f07022"/>
<rect x="788.5" y="348" width="5.5" height="5.5" fill="none" stroke="#fff" stroke-width="1"/><path d="M789.5 350.2 l1.5 1.6 l3 -3.6" stroke="#fff" stroke-width="1" fill="none"/>
</svg>

<div class="a" style="left:0;top:704px;width:1200px;height:21px;background:#141414"></div>
<div class="a" style="left:0;top:704px;width:1200px;height:1px;background:linear-gradient(90deg,rgba(255,255,255,0.005) 0.0%,rgba(255,255,255,0.006) 18.5%,rgba(255,255,255,0.008) 45.2%,rgba(255,255,255,0.001) 46.6%,rgba(255,255,255,0.003) 50.8%,rgba(255,255,255,0.001) 56.0%,rgba(255,255,255,0.008) 58.7%,rgba(255,255,255,0.007) 92.4%,rgba(255,255,255,0.000) 100.0%)"></div>
<div class="a" style="left:0;top:705px;width:1200px;height:1px;background:linear-gradient(90deg,rgba(255,255,255,0.058) 0.0%,rgba(255,255,255,0.077) 1.5%,rgba(255,255,255,0.084) 15.7%,rgba(255,255,255,0.054) 52.8%,rgba(255,255,255,0.115) 61.6%,rgba(255,255,255,0.112) 65.4%,rgba(255,255,255,0.168) 96.5%,rgba(255,255,255,0.123) 98.2%,rgba(255,255,255,0.140) 100.0%)"></div>
<div class="a" style="left:0;top:706px;width:1200px;height:1px;background:linear-gradient(90deg,rgba(255,255,255,0.149) 0.0%,rgba(255,255,255,0.094) 27.8%,rgba(255,255,255,0.082) 45.7%,rgba(255,255,255,0.090) 50.0%,rgba(255,255,255,0.060) 66.2%,rgba(255,255,255,0.157) 84.0%,rgba(255,255,255,0.106) 99.6%,rgba(255,255,255,0.169) 99.8%,rgba(255,255,255,0.104) 100.0%)"></div>
<div class="a" style="left:0;top:707px;width:1200px;height:1px;background:linear-gradient(90deg,rgba(255,255,255,0.106) 0.0%,rgba(255,255,255,0.060) 0.1%,rgba(255,255,255,0.138) 21.0%,rgba(255,255,255,0.159) 47.0%,rgba(255,255,255,0.088) 84.7%,rgba(255,255,255,0.062) 91.0%,rgba(255,255,255,0.097) 95.8%,rgba(255,255,255,0.185) 98.0%,rgba(255,255,255,0.156) 100.0%)"></div>
<div class="a" style="left:0;top:708px;width:1200px;height:1px;background:linear-gradient(90deg,rgba(255,255,255,0.113) 0.0%,rgba(255,255,255,0.077) 6.0%,rgba(255,255,255,0.152) 10.1%,rgba(255,255,255,0.068) 11.8%,rgba(255,255,255,0.140) 17.8%,rgba(255,255,255,0.066) 24.6%,rgba(255,255,255,0.109) 55.9%,rgba(255,255,255,0.080) 79.7%,rgba(255,255,255,0.088) 100.0%)"></div>
<div class="a" style="left:0;top:709px;width:1200px;height:1px;background:linear-gradient(90deg,rgba(255,255,255,0.140) 0.0%,rgba(255,255,255,0.064) 21.1%,rgba(255,255,255,0.189) 30.4%,rgba(255,255,255,0.080) 39.4%,rgba(255,255,255,0.086) 80.3%,rgba(255,255,255,0.158) 85.4%,rgba(255,255,255,0.096) 88.5%,rgba(255,255,255,0.091) 97.1%,rgba(255,255,255,0.060) 100.0%)"></div>
<div class="a" style="left:0;top:710px;width:1200px;height:1px;background:linear-gradient(90deg,rgba(255,255,255,0.118) 0.0%,rgba(255,255,255,0.130) 9.0%,rgba(255,255,255,0.171) 24.3%,rgba(255,255,255,0.076) 37.2%,rgba(255,255,255,0.072) 45.3%,rgba(255,255,255,0.177) 58.3%,rgba(255,255,255,0.164) 60.1%,rgba(255,255,255,0.085) 95.9%,rgba(255,255,255,0.077) 100.0%)"></div>
<div class="a" style="left:0;top:711px;width:1200px;height:1px;background:linear-gradient(90deg,rgba(255,255,255,0.065) 0.0%,rgba(255,255,255,0.055) 19.7%,rgba(255,255,255,0.185) 42.1%,rgba(255,255,255,0.083) 60.4%,rgba(255,255,255,0.149) 73.9%,rgba(255,255,255,0.086) 88.2%,rgba(255,255,255,0.165) 94.0%,rgba(255,255,255,0.134) 95.0%,rgba(255,255,255,0.091) 100.0%)"></div>
<div class="a" style="left:0;top:712px;width:1200px;height:1px;background:linear-gradient(90deg,rgba(255,255,255,0.089) 0.0%,rgba(255,255,255,0.178) 6.9%,rgba(255,255,255,0.079) 17.5%,rgba(255,255,255,0.052) 22.8%,rgba(255,255,255,0.088) 55.9%,rgba(255,255,255,0.112) 61.4%,rgba(255,255,255,0.058) 72.0%,rgba(255,255,255,0.075) 85.2%,rgba(255,255,255,0.102) 100.0%)"></div>
<div class="a" style="left:0;top:713px;width:1200px;height:1px;background:linear-gradient(90deg,rgba(255,255,255,0.132) 0.0%,rgba(255,255,255,0.070) 13.2%,rgba(255,255,255,0.055) 36.2%,rgba(255,255,255,0.053) 57.2%,rgba(255,255,255,0.177) 65.7%,rgba(255,255,255,0.148) 69.1%,rgba(255,255,255,0.185) 89.1%,rgba(255,255,255,0.053) 98.0%,rgba(255,255,255,0.139) 100.0%)"></div>
<div class="a" style="left:0;top:714px;width:1200px;height:1px;background:linear-gradient(90deg,rgba(255,255,255,0.176) 0.0%,rgba(255,255,255,0.153) 7.5%,rgba(255,255,255,0.149) 31.9%,rgba(255,255,255,0.161) 48.2%,rgba(255,255,255,0.178) 54.6%,rgba(255,255,255,0.099) 73.0%,rgba(255,255,255,0.146) 73.7%,rgba(255,255,255,0.176) 99.9%,rgba(255,255,255,0.172) 100.0%)"></div>
<div class="a" style="left:0;top:715px;width:1200px;height:1px;background:linear-gradient(90deg,rgba(255,255,255,0.135) 0.0%,rgba(255,255,255,0.061) 38.2%,rgba(255,255,255,0.140) 41.7%,rgba(255,255,255,0.189) 57.3%,rgba(255,255,255,0.173) 58.3%,rgba(255,255,255,0.152) 62.5%,rgba(255,255,255,0.104) 79.1%,rgba(255,255,255,0.153) 86.3%,rgba(255,255,255,0.131) 100.0%)"></div>
<div class="a" style="left:0;top:716px;width:1200px;height:1px;background:linear-gradient(90deg,rgba(255,255,255,0.082) 0.0%,rgba(255,255,255,0.148) 3.0%,rgba(255,255,255,0.120) 8.4%,rgba(255,255,255,0.136) 44.1%,rgba(255,255,255,0.179) 48.1%,rgba(255,255,255,0.086) 60.1%,rgba(255,255,255,0.052) 75.0%,rgba(255,255,255,0.092) 83.8%,rgba(255,255,255,0.145) 100.0%)"></div>
<div class="a" style="left:0;top:717px;width:1200px;height:1px;background:linear-gradient(90deg,rgba(255,255,255,0.143) 0.0%,rgba(255,255,255,0.078) 17.0%,rgba(255,255,255,0.110) 20.3%,rgba(255,255,255,0.163) 32.7%,rgba(255,255,255,0.178) 44.2%,rgba(255,255,255,0.173) 66.0%,rgba(255,255,255,0.104) 89.2%,rgba(255,255,255,0.132) 90.6%,rgba(255,255,255,0.094) 100.0%)"></div>
<div class="a" style="left:0;top:718px;width:1200px;height:1px;background:linear-gradient(90deg,rgba(255,255,255,0.074) 0.0%,rgba(255,255,255,0.113) 13.6%,rgba(255,255,255,0.089) 27.7%,rgba(255,255,255,0.080) 49.6%,rgba(255,255,255,0.108) 71.1%,rgba(255,255,255,0.138) 83.7%,rgba(255,255,255,0.119) 84.9%,rgba(255,255,255,0.094) 95.0%,rgba(255,255,255,0.167) 100.0%)"></div>
<div class="a" style="left:0;top:719px;width:1200px;height:1px;background:linear-gradient(90deg,rgba(255,255,255,0.130) 0.0%,rgba(255,255,255,0.093) 3.1%,rgba(255,255,255,0.161) 4.1%,rgba(255,255,255,0.053) 7.5%,rgba(255,255,255,0.069) 45.2%,rgba(255,255,255,0.114) 70.9%,rgba(255,255,255,0.053) 87.3%,rgba(255,255,255,0.166) 98.2%,rgba(255,255,255,0.083) 100.0%)"></div>
<div class="a" style="left:0;top:720px;width:1200px;height:1px;background:linear-gradient(90deg,rgba(255,255,255,0.184) 0.0%,rgba(255,255,255,0.146) 4.7%,rgba(255,255,255,0.078) 14.1%,rgba(255,255,255,0.117) 44.6%,rgba(255,255,255,0.075) 62.9%,rgba(255,255,255,0.052) 63.0%,rgba(255,255,255,0.116) 65.5%,rgba(255,255,255,0.150) 80.7%,rgba(255,255,255,0.075) 100.0%)"></div>
<div class="a" style="left:0;top:721px;width:1200px;height:1px;background:linear-gradient(90deg,rgba(255,255,255,0.161) 0.0%,rgba(255,255,255,0.177) 27.2%,rgba(255,255,255,0.062) 34.6%,rgba(255,255,255,0.181) 39.4%,rgba(255,255,255,0.151) 52.0%,rgba(255,255,255,0.068) 61.4%,rgba(255,255,255,0.113) 69.7%,rgba(255,255,255,0.138) 75.6%,rgba(255,255,255,0.177) 100.0%)"></div>
<div class="a" style="left:0;top:722px;width:1200px;height:1px;background:linear-gradient(90deg,rgba(255,255,255,0.079) 0.0%,rgba(255,255,255,0.151) 37.7%,rgba(255,255,255,0.165) 46.4%,rgba(255,255,255,0.140) 56.9%,rgba(255,255,255,0.150) 65.1%,rgba(255,255,255,0.080) 79.7%,rgba(255,255,255,0.176) 87.9%,rgba(255,255,255,0.187) 94.4%,rgba(255,255,255,0.187) 100.0%)"></div>
<div class="a" style="left:0;top:723px;width:1200px;height:1px;background:linear-gradient(90deg,rgba(255,255,255,0.112) 0.0%,rgba(255,255,255,0.127) 8.3%,rgba(255,255,255,0.158) 32.0%,rgba(255,255,255,0.118) 34.9%,rgba(255,255,255,0.054) 53.7%,rgba(255,255,255,0.163) 79.1%,rgba(255,255,255,0.059) 85.6%,rgba(255,255,255,0.162) 91.0%,rgba(255,255,255,0.074) 100.0%)"></div>
<div class="a" style="left:0;top:724px;width:1200px;height:1px;background:linear-gradient(90deg,rgba(255,255,255,0.147) 0.0%,rgba(255,255,255,0.182) 14.1%,rgba(255,255,255,0.119) 14.9%,rgba(255,255,255,0.183) 33.5%,rgba(255,255,255,0.062) 51.7%,rgba(255,255,255,0.081) 72.4%,rgba(255,255,255,0.124) 78.8%,rgba(255,255,255,0.091) 84.0%,rgba(255,255,255,0.152) 100.0%)"></div>
<div class="a" style="left:0;top:705px;width:1200px;height:20px;background:linear-gradient(90deg,rgba(255,255,255,0.03) 0%,rgba(0,0,0,0) 40%,rgba(0,0,0,0.35) 85%,rgba(0,0,0,0.45) 100%)"></div>

<svg style="left:0;top:0" width="850" height="700">
<polygon points="90.5,551.0 186.0,528.5 735.8,614.7 735.8,621.7 640.5,644.2 90.5,558.4" fill="#6f8db6" />
<polygon points="90.5,551.0 186.0,528.5 735.8,614.7 640.5,637.0" fill="#6f8db6" />
<polygon points="90.5,551.0 640.5,637.0 640.5,644.2 90.5,558.4" fill="#7da2d2" />
<polygon points="640.5,637.0 735.8,614.7 735.8,621.7 640.5,644.2" fill="#3d4d66" />
<polygon points="112.2,268.0 661.3,336.0 685.8,626.0 135.7,540.2" fill="#d6b200" />
<polygon points="661.3,336.0 665.5,336.5 690.0,626.5 685.8,626.0" fill="#6e5c00" />
<polygon points="65.0,254.2 160.0,231.3 710.0,317.7 710.0,324.7 614.7,347.3 65.0,261.3" fill="#6f8db6" />
<polygon points="65.0,254.2 160.0,231.3 710.0,317.7 614.7,339.3" fill="#6f8db6" />
<polygon points="65.0,254.2 614.7,339.3 614.7,347.3 65.0,261.3" fill="#7da2d2" />
<polygon points="614.7,339.3 710.0,317.7 710.0,324.7 614.7,347.3" fill="#3d4d66" />
<polygon points="255.6,310.5 512.5,250.0 529.9,254.0 276.1,312.8" fill="#6f8db6" />
<polygon points="256.0,310.6 276.1,312.8 276.1,317.8 257.1,315.5" fill="#7da2d2" />
<polygon points="276.1,312.8 529.9,254.0 529.9,258.0 276.1,317.8" fill="#3d4d66" />
<polygon points="252.0,216.3 267.6,220.3 504.7,164.5 512.5,250.0 259.4,309.4" fill="#3d4b61" />
<polygon points="248.3,216.3 252.5,216.8 259.6,309.6 255.6,311.0" fill="#7da2d2" />
<polygon points="248.3,212.1 501.8,152.6 522.0,156.4 267.6,215.7" fill="#6f8db6" />
<polygon points="248.3,212.1 267.6,215.7 267.6,220.3 248.3,216.3" fill="#7da2d2" />
<polygon points="267.6,215.7 522.0,156.4 522.0,160.4 267.6,220.3" fill="#3d4d66" />
<path d="M268 221.1 L505 165.3" stroke="#7590b8" stroke-width="1.1"/>
<path d="M267.6 215.9 L522 156.6" stroke="#86a6d6" stroke-width="0.9"/>
<path d="M277 314 L529 255" stroke="#5b75a0" stroke-width="0.6" opacity="0.6"/>
<polygon points="369.0,181.8 399.3,184.8 399.3,187.8 369.0,184.6" fill="#26336e" />
<polygon points="376.5,194.5 390.7,193.5 400.0,287.0 384.0,281.0" fill="#2b3b80" />
<polygon points="370.5,197.0 376.8,195.5 384.0,280.0 377.5,281.5" fill="#dcb400" />
<polygon points="377.5,281.5 384.0,279.5 400.5,285.0 400.5,289.0" fill="#e2ba00" />
<ellipse cx="404.2" cy="204.8" rx="4.691999999999999" ry="10.0" fill="#d4ac00"/><polygon points="409.0,209.5 405.0,214.5 401.0,209.5 401.0,199.5 405.0,194.5 409.0,199.5" fill="#ecc500" /><polygon points="404.8,195.0 409.0,199.5 409.0,209.5 405.0,214.5 404.8,214.0" fill="#b89400" /><polygon points="404.8,195.0 406.6,196.5 406.6,212.5 404.8,214.0" fill="#d8b300" /><ellipse cx="406.38" cy="204.5" rx="2.07" ry="4.699999999999999" fill="#f2cd00"/><ellipse cx="406.932" cy="204.5" rx="1.38" ry="3.4000000000000004" fill="#7e6600"/>
<polygon points="390.7,185.8 399.6,185.8 407.4,287.0 400.3,288.5" fill="#19234c" />
<polygon points="394.3,186.5 397.4,186.5 404.5,287.0 401.6,287.6" fill="#26336c" />
<ellipse cx="380.7" cy="208.8" rx="9.69" ry="9.8" fill="#d4ac00"/><polygon points="389.7,213.4 381.5,218.3 373.3,213.4 373.3,203.6 381.5,198.7 389.7,203.6" fill="#ecc500" /><polygon points="381.0,199.2 389.7,203.6 389.7,213.4 381.5,218.3 381.0,217.8" fill="#b89400" /><polygon points="381.0,199.2 384.8,200.7 384.8,216.3 381.0,217.8" fill="#d8b300" /><ellipse cx="384.35" cy="208.5" rx="4.275" ry="4.606" fill="#f2cd00"/><ellipse cx="385.49" cy="208.5" rx="2.85" ry="3.3320000000000003" fill="#7e6600"/>
<ellipse cx="361.2" cy="264.3" rx="10.2" ry="10.0" fill="#d4ac00"/><polygon points="370.7,269.0 362.0,274.0 353.3,269.0 353.3,259.0 362.0,254.0 370.7,259.0" fill="#ecc500" /><polygon points="361.5,254.5 370.7,259.0 370.7,269.0 362.0,274.0 361.5,273.5" fill="#b89400" /><polygon points="361.5,254.5 365.5,256.0 365.5,272.0 361.5,273.5" fill="#d8b300" /><ellipse cx="365.0" cy="264" rx="4.5" ry="4.699999999999999" fill="#f2cd00"/><ellipse cx="366.2" cy="264" rx="3.0" ry="3.4000000000000004" fill="#7e6600"/>
<ellipse cx="385.2" cy="266.1" rx="10.404" ry="10.0" fill="#d4ac00"/><polygon points="394.8,270.8 386.0,275.8 377.2,270.8 377.2,260.8 386.0,255.8 394.8,260.8" fill="#ecc500" /><polygon points="385.5,256.3 394.8,260.8 394.8,270.8 386.0,275.8 385.5,275.3" fill="#b89400" /><polygon points="385.5,256.3 389.6,257.8 389.6,273.8 385.5,275.3" fill="#d8b300" /><ellipse cx="389.06" cy="265.8" rx="4.59" ry="4.699999999999999" fill="#f2cd00"/><ellipse cx="390.284" cy="265.8" rx="3.0599999999999996" ry="3.4000000000000004" fill="#7e6600"/>
<ellipse cx="413.2" cy="252.70000000000002" rx="9.383999999999999" ry="10.5" fill="#d4ac00"/><polygon points="422.0,257.6 414.0,262.9 406.0,257.6 406.0,247.2 414.0,241.9 422.0,247.2" fill="#ecc500" /><polygon points="413.5,242.4 422.0,247.2 422.0,257.6 414.0,262.9 413.5,262.4" fill="#b89400" /><polygon points="413.5,242.4 417.2,244.0 417.2,260.8 413.5,262.4" fill="#d8b300" /><ellipse cx="416.76" cy="252.4" rx="4.14" ry="4.935" fill="#f2cd00"/><ellipse cx="417.864" cy="252.4" rx="2.76" ry="3.5700000000000003" fill="#7e6600"/>
<path d="M258.6 263.8 L281.4 258.7 M405 230 L475.8 212.5 M498.8 205 L600.7 182" stroke="#9ab8e4" stroke-width="0.8" stroke-dasharray="6 2 1 2" fill="none"/>
<g opacity="0.9">
<polygon points="222.0,259.2 252.0,262.0 252.0,276.0 222.8,270.6" fill="#c8c8c8" />
<polygon points="251.0,256.5 261.5,270.6 254.7,280.4" fill="#c8c8c8" />
<polygon points="233.5,237.2 241.0,238.7 245.5,283.5 238.3,283.3" fill="#c3c3c3" />
<polygon points="233.5,282.7 249.4,285.0 242.6,297.9" fill="#c3c3c3" />
<polygon points="509.0,193.1 534.0,196.5 535.0,208.0 509.0,204.1" fill="#c8c8c8" />
<polygon points="533.0,191.0 543.4,203.4 535.9,213.8" fill="#c8c8c8" />
<polygon points="520.0,169.7 526.9,171.0 530.3,215.0 523.5,215.0" fill="#c3c3c3" />
<polygon points="520.0,214.5 534.5,217.2 528.3,230.3" fill="#c3c3c3" />
</g>
<defs><linearGradient id="rod" x1="0" y1="0" x2="0" y2="1"><stop offset="0" stop-color="#b8b8b8"/><stop offset="0.5" stop-color="#888"/><stop offset="1" stop-color="#555"/></linearGradient></defs>
<polygon points="566.0,187.8 598.0,181.3 598.8,185.0 567.0,191.5" fill="url(#rod)" />
<polygon points="552.4,193.8 567.6,186.2 568.5,195.9" fill="#8c8c8c" />
<polygon points="552.4,193.8 567.6,186.2 566.0,190.0" fill="#c0c0c0" />
<defs><linearGradient id="lgA" x1="0" y1="0" x2="1" y2="0"><stop offset="0" stop-color="#e4e4e4"/><stop offset="1" stop-color="#a8a8a8"/></linearGradient><linearGradient id="cone" x1="0" y1="0" x2="0" y2="1"><stop offset="0" stop-color="#f0f0f0"/><stop offset="1" stop-color="#b0b0b0"/></linearGradient></defs>
<path d="M183 289 Q186 301 196 300 Q206 299 210 287" stroke="url(#lgA)" stroke-width="4.2" fill="none"/>
<path d="M206 296 Q213 292 212.5 282" stroke="#5c5c5c" stroke-width="4" fill="none"/>
<polygon points="176.6,291.0 182.6,276.6 195.5,286.5" fill="#b4b4b4" />
<polygon points="169.7,284.2 205.0,275.2 206.0,278.8 170.8,287.6" fill="url(#rod)" />
<ellipse cx="202.4" cy="278" rx="2.6" ry="5" fill="#d8d8d8"/>
<polygon points="203.5,272.5 214.5,274.2 204.5,281.0" fill="#575757" />
<path d="M60.5 385 Q60 366 78 365.5 Q90 365.5 92 373" stroke="url(#lgA)" stroke-width="3.8" fill="none"/>
<polygon points="83.6,367.0 93.3,369.5 91.0,375.0 86.0,371.5" fill="#5a5a5a" />
<polygon points="57.5,384.0 64.3,384.0 64.3,391.2 57.5,391.2" fill="#dedede" />
<polygon points="64.0,385.0 78.0,384.0 78.0,388.5 64.0,388.0" fill="#cfcfcf" />
<polygon points="77.8,381.5 91.0,388.8 78.0,394.0" fill="url(#cone)" />
<path d="M118 378 Q123 383 122 388" stroke="#d4d4d4" stroke-width="3" fill="none"/>
<path d="M98 404 Q100 411 106 413" stroke="#d0d0d0" stroke-width="3" fill="none"/>
<polygon points="94.2,376.0 104.0,371.5 106.0,373.0 107.7,387.8 99.0,390.0" fill="#8a8a8a" />
<polygon points="99.0,389.0 107.7,387.8 120.5,386.0 122.0,400.0 123.2,407.1 104.8,410.5 96.0,398.0" fill="#6b6b6b" />
<polygon points="105.8,364.2 114.5,362.2 116.9,386.9 107.7,387.8" fill="#636363" />
<polygon points="104.8,410.0 123.2,407.0 115.5,422.1" fill="#5e5e5e" />
<path d="M95 398 L107 383" stroke="#e8e8e8" stroke-width="0.8"/>
<polygon points="684.0,468.0 692.2,468.0 694.6,512.6 686.9,513.0" fill="#6a6a6a" />
<polygon points="677.5,469.5 686.0,453.5 695.0,467.5" fill="#6a6a6a" />
<polygon points="662.7,482.2 682.0,478.3 682.0,490.4 663.7,493.7" fill="#686868" />
<path d="M688 507 Q699 505 703 494" stroke="#6e6e6e" stroke-width="3.6" fill="none"/>
<path d="M689 506.5 Q697 505 700 500" stroke="#f4f4f4" stroke-width="0.8" fill="none"/>
<polygon points="672.4,482.6 703.3,483.6 703.3,492.3 672.4,492.8" fill="#c9c9c9" />
<polygon points="686.9,462.0 696.0,461.5 704.2,464.3 693.0,467.0 688.5,469.0" fill="#a9a9a9" />
<polygon points="692.6,466.2 697.0,465.0 705.2,475.0 701.0,479.0" fill="#8c8c8c" />
<path d="M704 486 Q707 467 721.5 466.5 Q733 466.5 737.5 474" stroke="url(#lgA)" stroke-width="4" fill="none"/>
<path d="M737 473 Q741 477 743 481" stroke="#6a6a6a" stroke-width="3.6" fill="none"/>
<polygon points="699.0,479.0 713.0,482.0 705.0,493.0" fill="#dedede" />
<polygon points="721.0,485.0 745.0,489.5 745.0,492.5 721.0,488.5" fill="#d2d2d2" />
<path d="M721 486.8 L745 491" stroke="#999" stroke-width="0.6" stroke-dasharray="1 1"/>
<circle cx="745.3" cy="491" r="1.6" fill="#555"/>
<circle cx="719.2" cy="487.3" r="3.6" fill="#eee" stroke="#5a5a5a" stroke-width="2.2"/>
<rect x="522.8" y="149.9" width="18.6" height="8.7" fill="rgb(150,150,150)" fill-opacity="0.5"/>
<rect x="606.2" y="172" width="19.3" height="9.1" fill="rgb(150,150,150)" fill-opacity="0.5"/>
<rect x="236.5" y="217.5" width="18.2" height="9.5" fill="rgb(150,150,150)" fill-opacity="0.5"/>
<rect x="268.4" y="263" width="18.2" height="8.6" fill="rgb(150,150,150)" fill-opacity="0.5"/>
<rect x="185.2" y="268.3" width="15.6" height="7.6" fill="rgb(150,150,150)" fill-opacity="0.5"/>
<rect x="159.9" y="278.9" width="15.1" height="7.6" fill="rgb(150,150,150)" fill-opacity="0.5"/>
<rect x="109.5" y="342.4" width="18.0" height="8.7" fill="rgb(150,150,150)" fill-opacity="0.5"/>
<rect x="49.3" y="373.5" width="16.7" height="9.3" fill="rgb(150,150,150)" fill-opacity="0.5"/>
<rect x="92.1" y="376" width="13.7" height="6.8" fill="rgb(150,150,150)" fill-opacity="0.5"/>
<rect x="81.6" y="392" width="14.2" height="7.5" fill="rgb(150,150,150)" fill-opacity="0.5"/>
<rect x="112" y="389.6" width="18.0" height="8.7" fill="rgb(150,150,150)" fill-opacity="0.5"/>
<rect x="105.1" y="400.1" width="26.1" height="8.1" fill="rgb(150,150,150)" fill-opacity="0.5"/>
<rect x="684.5" y="432.4" width="20.0" height="9.0" fill="rgb(150,150,150)" fill-opacity="0.5"/>
<rect x="719.7" y="466.2" width="15.8" height="7.6" fill="rgb(150,150,150)" fill-opacity="0.5"/>
<rect x="736.9" y="476.6" width="17.9" height="8.2" fill="rgb(150,150,150)" fill-opacity="0.5"/>
<rect x="752" y="484.1" width="16.3" height="9.0" fill="rgb(150,150,150)" fill-opacity="0.5"/>
<rect x="683.8" y="479.3" width="15.2" height="8.3" fill="rgb(150,150,150)" fill-opacity="0.5"/>
<rect x="701" y="493.1" width="21.4" height="7.6" fill="rgb(150,150,150)" fill-opacity="0.5"/>
<rect x="282.4" y="249.4" width="23.4" height="11.3" fill="#fff"/>
<rect x="475.7" y="202.8" width="23.3" height="11.6" fill="#fff"/>
<rect x="456.4" y="249.2" width="18.4" height="10.6" fill="#fff"/>
<rect x="451.7" y="453.4" width="18.6" height="11.4" fill="#fff"/>
<ellipse cx="813.3" cy="163.5" rx="26.5" ry="6.2" fill="none" stroke="#c4c4c4" stroke-width="2.6" transform="rotate(-11 813.3 163.5)"/>
<polygon points="793.8,143.4 807.2,141.4 811.4,169.0 797.9,165.9" fill="#676767" stroke="#2e2e2e" stroke-width="0.9"/>
<polygon points="807.2,141.4 827.6,138.6 830.0,162.1 811.4,169.0" fill="#6e6e6e" stroke="#2e2e2e" stroke-width="0.9"/>
<path d="M784.8 171.7 L793.1 169.3 M829 165.5 L835.5 165.8" stroke="#3a3a3a" stroke-width="0.9"/>
<text x="800" y="157" font-family="Liberation Sans" font-size="5" font-weight="bold" fill="#e8e8e8">-Y</text><text x="818" y="155" font-family="Liberation Sans" font-size="5.5" font-weight="bold" fill="#e8e8e8">-X</text>
</svg>
<div class="a" style="left:53.80px;top:3.64px;font-size:13.60px;line-height:16.32px;font-weight:700;font-style:italic;color:#fff;transform:scaleX(1.024);transform-origin:0 0;">StatiCa</div>
<div class="a" style="left:114.49px;top:5.43px;font-size:10.12px;line-height:12.14px;font-weight:700;font-style:italic;color:#fff;">CONNECTION</div>
<div class="a" style="left:9.32px;top:22.10px;font-size:5.66px;line-height:6.8px;font-weight:700;font-style:italic;color:#d8d8d8;">Calculate yesterday&#x27;s estimates</div>
<div class="a" style="left:536.57px;top:6.32px;font-size:9.80px;line-height:11.76px;font-weight:400;font-style:normal;color:#f4f4f4;transform:scaleX(0.885);transform-origin:0 0;">IdeaStatiCa-BIM-Member-ETABS-Example - 93</div>
<div class="a" style="left:153.64px;top:24.32px;font-size:8.80px;line-height:10.56px;font-weight:700;font-style:normal;color:#fff;transform:scaleX(0.815);transform-origin:0 0;">Project</div>
<div class="a" style="left:219.14px;top:24.32px;font-size:8.80px;line-height:10.56px;font-weight:700;font-style:normal;color:#fff;transform:scaleX(0.818);transform-origin:0 0;">Design</div>
<div class="a" style="left:279.64px;top:24.32px;font-size:8.80px;line-height:10.56px;font-weight:700;font-style:normal;color:#fff;transform:scaleX(0.826);transform-origin:0 0;">Materials</div>
<div class="a" style="left:7.60px;top:48.20px;font-size:9.00px;line-height:10.8px;font-weight:400;font-style:normal;color:#cfcfcf;transform:scaleX(0.899);transform-origin:0 0;">93</div>
<div class="a" style="left:35.43px;top:65.50px;font-size:9.00px;line-height:10.8px;font-weight:400;font-style:normal;color:#b9b9b9;transform:scaleX(0.816);transform-origin:0 0;">New</div>
<div class="a" style="left:58.35px;top:65.50px;font-size:9.00px;line-height:10.8px;font-weight:400;font-style:normal;color:#b9b9b9;transform:scaleX(0.785);transform-origin:0 0;">Copy</div>
<div class="a" style="left:18.50px;top:87.20px;font-size:9.00px;line-height:10.8px;font-weight:400;font-style:normal;color:#f4a062;transform:scaleX(0.879);transform-origin:0 0;">Project items</div>
<div class="a" style="left:102.44px;top:46.20px;font-size:9.00px;line-height:10.8px;font-weight:400;font-style:normal;color:#4a4a4a;transform:scaleX(0.809);transform-origin:0 0;">Undo</div>
<div class="a" style="left:102.45px;top:60.00px;font-size:9.00px;line-height:10.8px;font-weight:400;font-style:normal;color:#b9b9b9;transform:scaleX(0.781);transform-origin:0 0;">Redo</div>
<div class="a" style="left:102.47px;top:74.30px;font-size:9.00px;line-height:10.8px;font-weight:400;font-style:normal;color:#4a4a4a;transform:scaleX(0.731);transform-origin:0 0;">Save</div>
<div class="a" style="left:97.64px;top:87.20px;font-size:9.00px;line-height:10.8px;font-weight:400;font-style:normal;color:#bcbcbc;transform:scaleX(0.810);transform-origin:0 0;">Data</div>
<div class="a" style="left:131.63px;top:65.50px;font-size:9.00px;line-height:10.8px;font-weight:400;font-style:normal;color:#4a4a4a;transform:scaleX(0.827);transform-origin:0 0;">Members</div>
<div class="a" style="left:167.55px;top:65.50px;font-size:9.00px;line-height:10.8px;font-weight:400;font-style:normal;color:#4a4a4a;transform:scaleX(0.772);transform-origin:0 0;">Plates</div>
<div class="a" style="left:195.09px;top:65.50px;font-size:9.00px;line-height:10.8px;font-weight:400;font-style:normal;color:#4a4a4a;transform:scaleX(0.700);transform-origin:0 0;">LCS</div>
<div class="a" style="left:161.15px;top:87.20px;font-size:9.00px;line-height:10.8px;font-weight:400;font-style:normal;color:#bcbcbc;transform:scaleX(0.773);transform-origin:0 0;">Labels</div>
<div class="a" style="left:224.44px;top:65.50px;font-size:9.00px;line-height:10.8px;font-weight:400;font-style:normal;color:#4a4a4a;transform:scaleX(0.811);transform-origin:0 0;">New</div>
<div class="a" style="left:245.53px;top:65.50px;font-size:9.00px;line-height:10.8px;font-weight:400;font-style:normal;color:#4a4a4a;transform:scaleX(0.824);transform-origin:0 0;">Gallery</div>
<div class="a" style="left:232.35px;top:87.20px;font-size:9.00px;line-height:10.8px;font-weight:400;font-style:normal;color:#bcbcbc;transform:scaleX(0.787);transform-origin:0 0;">Pictures</div>
<div class="a" style="left:279.44px;top:65.50px;font-size:9.00px;line-height:10.8px;font-weight:400;font-style:normal;color:#4a4a4a;transform:scaleX(0.794);transform-origin:0 0;">Propose</div>
<div class="a" style="left:310.65px;top:65.50px;font-size:9.00px;line-height:10.8px;font-weight:400;font-style:normal;color:#4a4a4a;transform:scaleX(0.779);transform-origin:0 0;">Publish</div>
<div class="a" style="left:338.13px;top:65.50px;font-size:9.00px;line-height:10.8px;font-weight:400;font-style:normal;color:#4a4a4a;transform:scaleX(0.818);transform-origin:0 0;">Manage</div>
<div class="a" style="left:290.43px;top:87.20px;font-size:9.00px;line-height:10.8px;font-weight:400;font-style:normal;color:#bcbcbc;transform:scaleX(0.826);transform-origin:0 0;">Connection Library</div>
<div class="a" style="left:377.24px;top:65.50px;font-size:9.00px;line-height:10.8px;font-weight:400;font-style:normal;color:#b9b9b9;transform:scaleX(0.804);transform-origin:0 0;">Code</div>
<div class="a" style="left:377.24px;top:73.90px;font-size:9.00px;line-height:10.8px;font-weight:400;font-style:normal;color:#b9b9b9;transform:scaleX(0.790);transform-origin:0 0;">setup</div>
<div class="a" style="left:399.84px;top:65.50px;font-size:9.00px;line-height:10.8px;font-weight:400;font-style:normal;color:#b9b9b9;transform:scaleX(0.808);transform-origin:0 0;">Calculate</div>
<div class="a" style="left:434.33px;top:65.50px;font-size:9.00px;line-height:10.8px;font-weight:400;font-style:normal;color:#b9b9b9;transform:scaleX(0.824);transform-origin:0 0;">Overall</div>
<div class="a" style="left:437.05px;top:73.90px;font-size:9.00px;line-height:10.8px;font-weight:400;font-style:normal;color:#b9b9b9;transform:scaleX(0.783);transform-origin:0 0;">check</div>
<div class="a" style="left:405.17px;top:87.20px;font-size:9.00px;line-height:10.8px;font-weight:400;font-style:normal;color:#bcbcbc;transform:scaleX(0.724);transform-origin:0 0;">CBFEM</div>
<div class="a" style="left:468.23px;top:65.50px;font-size:9.00px;line-height:10.8px;font-weight:400;font-style:normal;color:#b9b9b9;transform:scaleX(0.818);transform-origin:0 0;">Settings</div>
<div class="a" style="left:504.03px;top:65.50px;font-size:9.00px;line-height:10.8px;font-weight:400;font-style:normal;color:#a3a3a3;transform:scaleX(0.820);transform-origin:0 0;">Loads in</div>
<div class="a" style="left:498.51px;top:73.90px;font-size:9.00px;line-height:10.8px;font-weight:400;font-style:normal;color:#a3a3a3;transform:scaleX(0.875);transform-origin:0 0;">equilibrium</div>
<div class="a" style="left:547.13px;top:65.50px;font-size:9.00px;line-height:10.8px;font-weight:400;font-style:normal;color:#b9b9b9;transform:scaleX(0.826);transform-origin:0 0;">Loads -</div>
<div class="a" style="left:541.13px;top:73.90px;font-size:9.00px;line-height:10.8px;font-weight:400;font-style:normal;color:#b9b9b9;transform:scaleX(0.815);transform-origin:0 0;">percentage</div>
<div class="a" style="left:510.12px;top:87.20px;font-size:9.00px;line-height:10.8px;font-weight:400;font-style:normal;color:#bcbcbc;transform:scaleX(0.838);transform-origin:0 0;">Options</div>
<div class="a" style="left:594.38px;top:65.50px;font-size:9.00px;line-height:10.8px;font-weight:400;font-style:normal;color:#b9b9b9;transform:scaleX(0.700);transform-origin:0 0;">XLS</div>
<div class="a" style="left:588.40px;top:73.90px;font-size:9.00px;line-height:10.8px;font-weight:400;font-style:normal;color:#b9b9b9;transform:scaleX(0.894);transform-origin:0 0;">Import</div>
<div class="a" style="left:615.43px;top:65.50px;font-size:9.00px;line-height:10.8px;font-weight:400;font-style:normal;color:#b9b9b9;transform:scaleX(0.817);transform-origin:0 0;">Connection</div>
<div class="a" style="left:622.71px;top:73.90px;font-size:9.00px;line-height:10.8px;font-weight:400;font-style:normal;color:#b9b9b9;transform:scaleX(0.863);transform-origin:0 0;">Import</div>
<div class="a" style="left:661.37px;top:65.50px;font-size:9.00px;line-height:10.8px;font-weight:400;font-style:normal;color:#b9b9b9;transform:scaleX(0.723);transform-origin:0 0;">XLS</div>
<div class="a" style="left:656.63px;top:73.90px;font-size:9.00px;line-height:10.8px;font-weight:400;font-style:normal;color:#b9b9b9;transform:scaleX(0.815);transform-origin:0 0;">Export</div>
<div class="a" style="left:599.41px;top:87.20px;font-size:9.00px;line-height:10.8px;font-weight:400;font-style:normal;color:#bcbcbc;transform:scaleX(0.864);transform-origin:0 0;">Import/Export loads</div>
<div class="a" style="left:689.33px;top:65.50px;font-size:9.00px;line-height:10.8px;font-weight:400;font-style:normal;color:#b9b9b9;transform:scaleX(0.833);transform-origin:0 0;">Member</div>
<div class="a" style="left:723.14px;top:65.50px;font-size:9.00px;line-height:10.8px;font-weight:400;font-style:normal;color:#b9b9b9;transform:scaleX(0.804);transform-origin:0 0;">Load</div>
<div class="a" style="left:745.32px;top:65.50px;font-size:9.00px;line-height:10.8px;font-weight:400;font-style:normal;color:#4a4a4a;transform:scaleX(0.842);transform-origin:0 0;">Operation</div>
<div class="a" style="left:726.43px;top:87.20px;font-size:9.00px;line-height:10.8px;font-weight:400;font-style:normal;color:#bcbcbc;transform:scaleX(0.816);transform-origin:0 0;">New</div>
<div class="a" style="left:728.65px;top:103.12px;font-size:8.80px;line-height:10.56px;font-weight:700;font-style:normal;color:#fff;transform:scaleX(0.790);transform-origin:0 0;">Solid</div>
<div class="a" style="left:754.34px;top:103.12px;font-size:8.80px;line-height:10.56px;font-weight:400;font-style:normal;color:#f0f0f0;transform:scaleX(0.813);transform-origin:0 0;">Transparent</div>
<div class="a" style="left:803.32px;top:103.12px;font-size:8.80px;line-height:10.56px;font-weight:400;font-style:normal;color:#f0f0f0;transform:scaleX(0.870);transform-origin:0 0;">Wireframe</div>
<div class="a" style="left:678.63px;top:128.62px;font-size:8.80px;line-height:10.56px;font-weight:700;font-style:normal;color:#f07022;transform:scaleX(0.836);transform-origin:0 0;">Production cost</div>
<div class="a" style="left:738.05px;top:129.12px;font-size:8.80px;line-height:10.56px;font-weight:400;font-style:normal;color:#555;transform:scaleX(1.023);transform-origin:0 0;">-</div>
<div class="a" style="left:743.85px;top:128.62px;font-size:8.80px;line-height:10.56px;font-weight:700;font-style:normal;color:#222;transform:scaleX(0.787);transform-origin:0 0;">22 US$</div>
<div class="a" style="left:773.15px;top:192.60px;font-size:9.00px;line-height:10.8px;font-weight:700;font-style:normal;color:#444;transform:scaleX(0.989);transform-origin:0 0;">93</div>
<div class="a" style="left:786.89px;top:206.70px;font-size:9.00px;line-height:10.8px;font-weight:700;font-style:normal;color:#444;transform:scaleX(0.916);transform-origin:0 0;">Members</div>
<div class="a" style="left:803.63px;top:220.60px;font-size:9.00px;line-height:10.8px;font-weight:400;font-style:normal;color:#444;transform:scaleX(0.822);transform-origin:0 0;">M101</div>
<div class="a" style="left:803.58px;top:234.80px;font-size:9.00px;line-height:10.8px;font-weight:400;font-style:normal;color:#444;transform:scaleX(0.942);transform-origin:0 0;text-decoration:underline;">M83</div>
<div class="a" style="left:803.63px;top:248.70px;font-size:9.00px;line-height:10.8px;font-weight:400;font-style:normal;color:#444;transform:scaleX(0.824);transform-origin:0 0;">M117</div>
<div class="a" style="left:786.90px;top:262.80px;font-size:9.00px;line-height:10.8px;font-weight:700;font-style:normal;color:#444;transform:scaleX(0.888);transform-origin:0 0;">Operations</div>
<div class="a" style="left:803.66px;top:277.00px;font-size:9.00px;line-height:10.8px;font-weight:400;font-style:normal;color:#444;transform:scaleX(0.764);transform-origin:0 0;">PP1</div>
<div class="a" style="left:803.64px;top:291.00px;font-size:9.00px;line-height:10.8px;font-weight:400;font-style:normal;color:#444;transform:scaleX(0.811);transform-origin:0 0;">SM1</div>
<div class="a" style="left:803.62px;top:305.00px;font-size:9.00px;line-height:10.8px;font-weight:400;font-style:normal;color:#444;transform:scaleX(0.840);transform-origin:0 0;">GRD1</div>
<div class="a" style="left:803.62px;top:319.00px;font-size:9.00px;line-height:10.8px;font-weight:400;font-style:normal;color:#444;transform:scaleX(0.840);transform-origin:0 0;">GRD2</div>
<div class="a" style="left:803.66px;top:333.00px;font-size:9.00px;line-height:10.8px;font-weight:400;font-style:normal;color:#444;transform:scaleX(0.764);transform-origin:0 0;">SP1</div>
<div class="a" style="left:803.65px;top:346.80px;font-size:9.00px;line-height:10.8px;font-weight:700;font-style:normal;color:#fff;transform:scaleX(0.780);transform-origin:0 0;">PCUT1</div>
<div class="a" style="left:858.65px;top:103.28px;font-size:9.20px;line-height:11.04px;font-weight:700;font-style:normal;color:#fff;transform:scaleX(0.756);transform-origin:0 0;">PCUT1</div>
<div class="a" style="left:888.92px;top:103.28px;font-size:9.20px;line-height:11.04px;font-weight:400;font-style:normal;color:#fbd7c0;transform:scaleX(0.828);transform-origin:0 0;">[Cut of plate]</div>
<div class="a" style="left:1145.64px;top:103.28px;font-size:9.20px;line-height:11.04px;font-weight:700;font-style:normal;color:#fff;transform:scaleX(0.774);transform-origin:0 0;">Copy</div>
<div class="a" style="left:1170.02px;top:103.28px;font-size:9.20px;line-height:11.04px;font-weight:700;font-style:normal;color:#fff;transform:scaleX(0.818);transform-origin:0 0;">Delete</div>
<div class="a" style="left:879.55px;top:126.62px;font-size:9.80px;line-height:11.76px;font-weight:700;font-style:normal;color:#f07022;transform:scaleX(0.918);transform-origin:0 0;">Cut of plate</div>
<div class="a" style="left:879.60px;top:144.08px;font-size:9.20px;line-height:11.04px;font-weight:400;font-style:normal;color:#222;transform:scaleX(0.877);transform-origin:0 0;">Modified item</div>
<div class="a" style="left:879.62px;top:160.08px;font-size:9.20px;line-height:11.04px;font-weight:400;font-style:normal;color:#222;transform:scaleX(0.827);transform-origin:0 0;">Cut by</div>
<div class="a" style="left:879.61px;top:176.28px;font-size:9.20px;line-height:11.04px;font-weight:400;font-style:normal;color:#222;transform:scaleX(0.857);transform-origin:0 0;">Cutting method</div>
<div class="a" style="left:879.61px;top:192.38px;font-size:9.20px;line-height:11.04px;font-weight:400;font-style:normal;color:#222;transform:scaleX(0.842);transform-origin:0 0;">Remaining part</div>
<div class="a" style="left:879.61px;top:208.28px;font-size:9.20px;line-height:11.04px;font-weight:400;font-style:normal;color:#222;transform:scaleX(0.855);transform-origin:0 0;">Offset [in]</div>
<div class="a" style="left:879.56px;top:225.62px;font-size:9.80px;line-height:11.76px;font-weight:700;font-style:normal;color:#f07022;transform:scaleX(0.906);transform-origin:0 0;">Welds</div>
<div class="a" style="left:879.61px;top:243.08px;font-size:9.20px;line-height:11.04px;font-weight:400;font-style:normal;color:#222;transform:scaleX(0.841);transform-origin:0 0;">All welds [in]</div>
<div class="a" style="left:943.18px;top:144.08px;font-size:9.20px;line-height:11.04px;font-weight:400;font-style:normal;color:#222;transform:scaleX(0.700);transform-origin:0 0;">SP1</div>
<div class="a" style="left:943.16px;top:160.08px;font-size:9.20px;line-height:11.04px;font-weight:400;font-style:normal;color:#222;transform:scaleX(0.740);transform-origin:0 0;">SM1</div>
<div class="a" style="left:943.64px;top:176.08px;font-size:9.20px;line-height:11.04px;font-weight:400;font-style:normal;color:#222;transform:scaleX(0.773);transform-origin:0 0;">Surface</div>
<div class="a" style="left:944.16px;top:192.38px;font-size:9.20px;line-height:11.04px;font-weight:400;font-style:normal;color:#222;transform:scaleX(0.744);transform-origin:0 0;">+</div>
<div class="a" style="left:942.09px;top:208.28px;font-size:9.20px;line-height:11.04px;font-weight:400;font-style:normal;color:#222;transform:scaleX(0.895);transform-origin:0 0;">0&quot;</div>
<div class="a" style="left:939.63px;top:242.08px;font-size:9.20px;line-height:11.04px;font-weight:400;font-style:normal;color:#666;transform:scaleX(0.810);transform-origin:0 0;">3/16</div>
<div class="a" style="left:974.16px;top:243.08px;font-size:9.20px;line-height:11.04px;font-weight:400;font-style:normal;color:#222;transform:scaleX(0.743);transform-origin:0 0;">E70xx</div>
<div class="a" style="left:4.24px;top:691.25px;font-size:9.25px;line-height:11.1px;font-weight:400;font-style:normal;color:#3a3a3a;">M83-Web 1: Cross-section W21X55(Iwn528x(208/208))(Iwn528x(208/208)), Material A913 Gr.50, Thickness 3/8 in</div>
<div class="a" style="left:14.95px;top:711.22px;font-size:7.80px;line-height:9.36px;font-weight:700;font-style:normal;color:#8a8a8a;transform:scaleX(0.898);transform-origin:0 0;">Design code:</div>
<div class="a" style="left:62.33px;top:711.22px;font-size:7.80px;line-height:9.36px;font-weight:700;font-style:normal;color:#f2f2f2;transform:scaleX(0.947);transform-origin:0 0;">AISC - LRFD (2016)</div>
<div class="a" style="left:143.15px;top:711.22px;font-size:7.80px;line-height:9.36px;font-weight:700;font-style:normal;color:#8a8a8a;transform:scaleX(0.908);transform-origin:0 0;">Analysis:</div>
<div class="a" style="left:176.64px;top:711.22px;font-size:7.80px;line-height:9.36px;font-weight:700;font-style:normal;color:#f2f2f2;transform:scaleX(0.910);transform-origin:0 0;">Stress, strain</div>
<div class="a" style="left:234.14px;top:711.22px;font-size:7.80px;line-height:9.36px;font-weight:700;font-style:normal;color:#8a8a8a;transform:scaleX(0.927);transform-origin:0 0;">Load effects:</div>
<div class="a" style="left:282.13px;top:711.22px;font-size:7.80px;line-height:9.36px;font-weight:700;font-style:normal;color:#f2f2f2;transform:scaleX(0.948);transform-origin:0 0;">In equilibrium</div>
<div class="a" style="left:343.62px;top:711.22px;font-size:7.80px;line-height:9.36px;font-weight:700;font-style:normal;color:#8a8a8a;transform:scaleX(0.973);transform-origin:0 0;">Units:</div>
<div class="a" style="left:369.13px;top:711.22px;font-size:7.80px;line-height:9.36px;font-weight:700;font-style:normal;color:#f2f2f2;transform:scaleX(0.938);transform-origin:0 0;">in</div>
<div class="a" style="left:1122.14px;top:711.33px;font-size:7.12px;line-height:8.54px;font-weight:400;font-style:normal;color:#e06a20;">www.</div>
<div class="a" style="left:1139.11px;top:710.89px;font-size:7.84px;line-height:9.41px;font-weight:400;font-style:normal;color:#e8e8e8;">ideastatica</div>
<div class="a" style="left:1176.63px;top:711.17px;font-size:7.38px;line-height:8.86px;font-weight:400;font-style:normal;color:#e06a20;">.com</div>
<div class="a" style="left:523.23px;top:148.85px;font-size:9.00px;line-height:10.8px;font-weight:400;font-style:normal;color:#1e1e1e;transform:scaleX(0.829);transform-origin:0 0;">-3.71</div>
<div class="a" style="left:606.61px;top:171.15px;font-size:9.00px;line-height:10.8px;font-weight:400;font-style:normal;color:#1e1e1e;transform:scaleX(0.863);transform-origin:0 0;">-0.03</div>
<div class="a" style="left:236.94px;top:216.85px;font-size:9.00px;line-height:10.8px;font-weight:400;font-style:normal;color:#1e1e1e;transform:scaleX(0.809);transform-origin:0 0;">-3.70</div>
<div class="a" style="left:268.84px;top:261.90px;font-size:9.00px;line-height:10.8px;font-weight:400;font-style:normal;color:#1e1e1e;transform:scaleX(0.809);transform-origin:0 0;">-0.15</div>
<div class="a" style="left:185.64px;top:266.70px;font-size:9.00px;line-height:10.8px;font-weight:400;font-style:normal;color:#1e1e1e;transform:scaleX(0.799);transform-origin:0 0;">0.01</div>
<div class="a" style="left:160.35px;top:277.30px;font-size:9.00px;line-height:10.8px;font-weight:400;font-style:normal;color:#1e1e1e;transform:scaleX(0.771);transform-origin:0 0;">0.03</div>
<div class="a" style="left:109.94px;top:341.35px;font-size:9.00px;line-height:10.8px;font-weight:400;font-style:normal;color:#1e1e1e;transform:scaleX(0.799);transform-origin:0 0;">-4.61</div>
<div class="a" style="left:49.77px;top:372.75px;font-size:9.00px;line-height:10.8px;font-weight:400;font-style:normal;color:#1e1e1e;transform:scaleX(0.736);transform-origin:0 0;">-7.56</div>
<div class="a" style="left:92.58px;top:374.00px;font-size:9.00px;line-height:10.8px;font-weight:400;font-style:normal;color:#1e1e1e;transform:scaleX(0.700);transform-origin:0 0;">0.00</div>
<div class="a" style="left:82.08px;top:390.35px;font-size:9.00px;line-height:10.8px;font-weight:400;font-style:normal;color:#1e1e1e;transform:scaleX(0.719);transform-origin:0 0;">0.01</div>
<div class="a" style="left:112.44px;top:388.55px;font-size:9.00px;line-height:10.8px;font-weight:400;font-style:normal;color:#1e1e1e;transform:scaleX(0.799);transform-origin:0 0;">-0.02</div>
<div class="a" style="left:105.54px;top:398.75px;font-size:9.00px;line-height:10.8px;font-weight:400;font-style:normal;color:#1e1e1e;transform:scaleX(0.803);transform-origin:0 0;">-162.29</div>
<div class="a" style="left:684.93px;top:431.50px;font-size:9.00px;line-height:10.8px;font-weight:400;font-style:normal;color:#1e1e1e;transform:scaleX(0.817);transform-origin:0 0;">12.02</div>
<div class="a" style="left:720.14px;top:464.60px;font-size:9.00px;line-height:10.8px;font-weight:400;font-style:normal;color:#1e1e1e;transform:scaleX(0.811);transform-origin:0 0;">0.00</div>
<div class="a" style="left:737.34px;top:475.30px;font-size:9.00px;line-height:10.8px;font-weight:400;font-style:normal;color:#1e1e1e;transform:scaleX(0.795);transform-origin:0 0;">-0.02</div>
<div class="a" style="left:752.42px;top:483.20px;font-size:9.00px;line-height:10.8px;font-weight:400;font-style:normal;color:#1e1e1e;transform:scaleX(0.839);transform-origin:0 0;">8.08</div>
<div class="a" style="left:684.25px;top:478.05px;font-size:9.00px;line-height:10.8px;font-weight:400;font-style:normal;color:#1e1e1e;transform:scaleX(0.776);transform-origin:0 0;">0.02</div>
<div class="a" style="left:701.48px;top:491.50px;font-size:9.00px;line-height:10.8px;font-weight:400;font-style:normal;color:#1e1e1e;transform:scaleX(0.719);transform-origin:0 0;">162.52</div>
<div class="a" style="left:283.79px;top:249.11px;font-size:9.40px;line-height:11.28px;font-weight:400;font-style:normal;color:#111;transform:scaleX(0.868);transform-origin:0 0;">M117</div>
<div class="a" style="left:477.11px;top:202.66px;font-size:9.40px;line-height:11.28px;font-weight:400;font-style:normal;color:#111;transform:scaleX(0.838);transform-origin:0 0;">M101</div>
<div class="a" style="left:457.84px;top:248.56px;font-size:9.40px;line-height:11.28px;font-weight:400;font-style:normal;color:#111;transform:scaleX(0.766);transform-origin:0 0;">SM1</div>
<div class="a" style="left:453.11px;top:453.16px;font-size:9.40px;line-height:11.28px;font-weight:400;font-style:normal;color:#111;transform:scaleX(0.820);transform-origin:0 0;">M83</div>
</body></html>
